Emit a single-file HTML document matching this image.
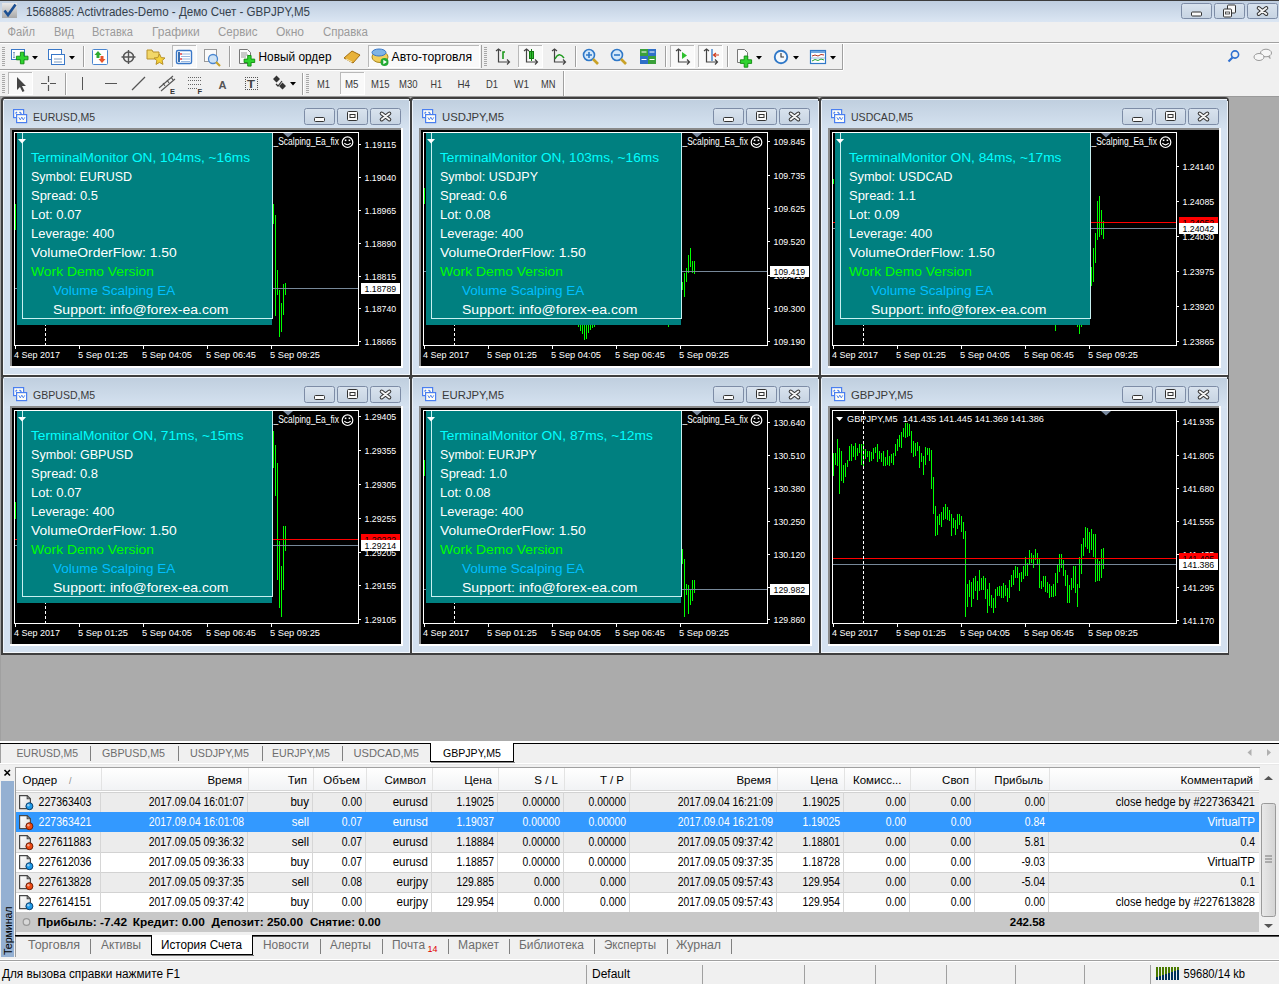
<!DOCTYPE html><html><head><meta charset="utf-8"><style>html,body{margin:0;padding:0;overflow:hidden;background:#f0f0f0} svg{display:block} text{font-family:"Liberation Sans",sans-serif}</style></head><body>
<svg width="1279" height="984" viewBox="0 0 1279 984" shape-rendering="crispEdges">
<defs>
<linearGradient id="gTitle" x1="0" y1="0" x2="0" y2="1"><stop offset="0" stop-color="#bfcee0"/><stop offset="1" stop-color="#dbe6f3"/></linearGradient>
<linearGradient id="gWin" x1="0" y1="0" x2="0" y2="1"><stop offset="0" stop-color="#c0cfdf"/><stop offset="1" stop-color="#d6e3f1"/></linearGradient>
<linearGradient id="gBtn" x1="0" y1="0" x2="0" y2="1"><stop offset="0" stop-color="#d9e3ee"/><stop offset="1" stop-color="#c6d3e2"/></linearGradient>
<linearGradient id="gHdr" x1="0" y1="0" x2="0" y2="1"><stop offset="0" stop-color="#ffffff"/><stop offset="1" stop-color="#f1f2f4"/></linearGradient>
<linearGradient id="gIco" x1="0" y1="0" x2="0" y2="1"><stop offset="0" stop-color="#e8e8e8"/><stop offset="1" stop-color="#a8a8a8"/></linearGradient>
<linearGradient id="gDoc" x1="0" y1="0" x2="1" y2="1"><stop offset="0" stop-color="#ffffff"/><stop offset="1" stop-color="#dcdcdc"/></linearGradient>
<linearGradient id="gThumb" x1="0" y1="0" x2="1" y2="0"><stop offset="0" stop-color="#e9e9e9"/><stop offset="1" stop-color="#d4d4d4"/></linearGradient>
</defs>
<rect x="0" y="0" width="1279" height="984" fill="#f0f0f0" />
<rect x="0" y="0" width="1279" height="1" fill="#3c3c3c" />
<rect x="0" y="1" width="1279" height="21" fill="url(#gTitle)" />
<rect x="2" y="3" width="15" height="15" fill="url(#gIco)" />
<path d="M4.5 10.5 L8 15 L15.5 4.5" stroke="#1b4f93" stroke-width="2.6" fill="none" shape-rendering="geometricPrecision"/>
<text x="26" y="15.5" font-size="12" fill="#34404c" textLength="284" lengthAdjust="spacingAndGlyphs" xml:space="preserve" >1568885: Activtrades-Demo - Демо Счет - GBPJPY,M5</text>
<rect x="1181.5" y="3.5" width="30" height="15" rx="2" fill="url(#gBtn)" stroke="#7d8ca6" shape-rendering="geometricPrecision"/>
<rect x="1191.5" y="12.0" width="10" height="4" rx="1" fill="#fafafa" stroke="#333" stroke-width="1" shape-rendering="geometricPrecision"/>
<rect x="1214.5" y="3.5" width="30" height="15" rx="2" fill="url(#gBtn)" stroke="#7d8ca6" shape-rendering="geometricPrecision"/>
<rect x="1227.5" y="5.0" width="8" height="8" rx="1" fill="#fafafa" stroke="#333" shape-rendering="geometricPrecision"/>
<rect x="1223.5" y="9.0" width="8" height="8" rx="1" fill="#fafafa" stroke="#333" shape-rendering="geometricPrecision"/>
<rect x="1225.5" y="12.0" width="4" height="2" fill="none" stroke="#333" stroke-width="0.8" shape-rendering="geometricPrecision"/>
<rect x="1247.5" y="3.5" width="30" height="15" rx="2" fill="url(#gBtn)" stroke="#7d8ca6" shape-rendering="geometricPrecision"/>
<path d="M1258.7 8.0 L1266.3 14.0 M1266.3 8.0 L1258.7 14.0" stroke="#333" stroke-width="4" stroke-linecap="round" shape-rendering="geometricPrecision"/>
<path d="M1258.7 8.0 L1266.3 14.0 M1266.3 8.0 L1258.7 14.0" stroke="#f4f4f4" stroke-width="2" stroke-linecap="round" shape-rendering="geometricPrecision"/>
<text x="7.5" y="36" font-size="12" fill="#9b9b9b" textLength="27.5" lengthAdjust="spacingAndGlyphs" xml:space="preserve" >Файл</text>
<text x="54" y="36" font-size="12" fill="#9b9b9b" textLength="20" lengthAdjust="spacingAndGlyphs" xml:space="preserve" >Вид</text>
<text x="92" y="36" font-size="12" fill="#9b9b9b" textLength="41" lengthAdjust="spacingAndGlyphs" xml:space="preserve" >Вставка</text>
<text x="152" y="36" font-size="12" fill="#9b9b9b" textLength="47.6" lengthAdjust="spacingAndGlyphs" xml:space="preserve" >Графики</text>
<text x="218" y="36" font-size="12" fill="#9b9b9b" textLength="39.5" lengthAdjust="spacingAndGlyphs" xml:space="preserve" >Сервис</text>
<text x="276" y="36" font-size="12" fill="#9b9b9b" textLength="28" lengthAdjust="spacingAndGlyphs" xml:space="preserve" >Окно</text>
<text x="323" y="36" font-size="12" fill="#9b9b9b" textLength="45" lengthAdjust="spacingAndGlyphs" xml:space="preserve" >Справка</text>
<rect x="0" y="42" width="1279" height="1" fill="#a0a0a0" />
<rect x="0" y="43" width="1279" height="1" fill="#ffffff" />
<rect x="842" y="44" width="1" height="26" fill="#a0a0a0" />
<rect x="843" y="44" width="1" height="26" fill="#ffffff" />
<rect x="0" y="69" width="843" height="1" fill="#a0a0a0" />
<rect x="0" y="70" width="843" height="1" fill="#ffffff" />
<rect x="563" y="71" width="1" height="25" fill="#a0a0a0" />
<rect x="564" y="71" width="1" height="25" fill="#ffffff" />
<rect x="2" y="47" width="3" height="1" fill="#a8a8a8" />
<rect x="2" y="49" width="3" height="1" fill="#a8a8a8" />
<rect x="2" y="51" width="3" height="1" fill="#a8a8a8" />
<rect x="2" y="53" width="3" height="1" fill="#a8a8a8" />
<rect x="2" y="55" width="3" height="1" fill="#a8a8a8" />
<rect x="2" y="57" width="3" height="1" fill="#a8a8a8" />
<rect x="2" y="59" width="3" height="1" fill="#a8a8a8" />
<rect x="2" y="61" width="3" height="1" fill="#a8a8a8" />
<rect x="2" y="63" width="3" height="1" fill="#a8a8a8" />
<rect x="2" y="65" width="3" height="1" fill="#a8a8a8" />
<rect x="2" y="74" width="3" height="1" fill="#a8a8a8" />
<rect x="2" y="76" width="3" height="1" fill="#a8a8a8" />
<rect x="2" y="78" width="3" height="1" fill="#a8a8a8" />
<rect x="2" y="80" width="3" height="1" fill="#a8a8a8" />
<rect x="2" y="82" width="3" height="1" fill="#a8a8a8" />
<rect x="2" y="84" width="3" height="1" fill="#a8a8a8" />
<rect x="2" y="86" width="3" height="1" fill="#a8a8a8" />
<rect x="2" y="88" width="3" height="1" fill="#a8a8a8" />
<rect x="2" y="90" width="3" height="1" fill="#a8a8a8" />
<rect x="2" y="92" width="3" height="1" fill="#a8a8a8" />
<rect x="484" y="47" width="3" height="1" fill="#a8a8a8" />
<rect x="484" y="49" width="3" height="1" fill="#a8a8a8" />
<rect x="484" y="51" width="3" height="1" fill="#a8a8a8" />
<rect x="484" y="53" width="3" height="1" fill="#a8a8a8" />
<rect x="484" y="55" width="3" height="1" fill="#a8a8a8" />
<rect x="484" y="57" width="3" height="1" fill="#a8a8a8" />
<rect x="484" y="59" width="3" height="1" fill="#a8a8a8" />
<rect x="484" y="61" width="3" height="1" fill="#a8a8a8" />
<rect x="484" y="63" width="3" height="1" fill="#a8a8a8" />
<rect x="484" y="65" width="3" height="1" fill="#a8a8a8" />
<rect x="306" y="74" width="3" height="1" fill="#a8a8a8" />
<rect x="306" y="76" width="3" height="1" fill="#a8a8a8" />
<rect x="306" y="78" width="3" height="1" fill="#a8a8a8" />
<rect x="306" y="80" width="3" height="1" fill="#a8a8a8" />
<rect x="306" y="82" width="3" height="1" fill="#a8a8a8" />
<rect x="306" y="84" width="3" height="1" fill="#a8a8a8" />
<rect x="306" y="86" width="3" height="1" fill="#a8a8a8" />
<rect x="306" y="88" width="3" height="1" fill="#a8a8a8" />
<rect x="306" y="90" width="3" height="1" fill="#a8a8a8" />
<rect x="306" y="92" width="3" height="1" fill="#a8a8a8" />
<rect x="83" y="46" width="1" height="21" fill="#a0a0a0" />
<rect x="84" y="46" width="1" height="21" fill="#ffffff" />
<rect x="229" y="46" width="1" height="21" fill="#a0a0a0" />
<rect x="230" y="46" width="1" height="21" fill="#ffffff" />
<rect x="575" y="46" width="1" height="21" fill="#a0a0a0" />
<rect x="576" y="46" width="1" height="21" fill="#ffffff" />
<rect x="665" y="46" width="1" height="21" fill="#a0a0a0" />
<rect x="666" y="46" width="1" height="21" fill="#ffffff" />
<rect x="727" y="46" width="1" height="21" fill="#a0a0a0" />
<rect x="728" y="46" width="1" height="21" fill="#ffffff" />
<rect x="481" y="45" width="1" height="23" fill="#a0a0a0" />
<rect x="65" y="73" width="1" height="22" fill="#a0a0a0" />
<rect x="66" y="73" width="1" height="22" fill="#ffffff" />
<rect x="302" y="73" width="1" height="22" fill="#a0a0a0" />
<rect x="303" y="73" width="1" height="22" fill="#ffffff" />
<rect x="172" y="45" width="25" height="23" fill="#f9f9f9" />
<rect x="172" y="45" width="25" height="1" fill="#b9b9b9" />
<rect x="172" y="45" width="1" height="23" fill="#b9b9b9" />
<rect x="172" y="67" width="25" height="1" fill="#ffffff" />
<rect x="196" y="45" width="1" height="23" fill="#ffffff" />
<rect x="368" y="45" width="112" height="23" fill="#f9f9f9" />
<rect x="368" y="45" width="112" height="1" fill="#b9b9b9" />
<rect x="368" y="45" width="1" height="23" fill="#b9b9b9" />
<rect x="368" y="67" width="112" height="1" fill="#ffffff" />
<rect x="479" y="45" width="1" height="23" fill="#ffffff" />
<rect x="518" y="45" width="25" height="23" fill="#f9f9f9" />
<rect x="518" y="45" width="25" height="1" fill="#b9b9b9" />
<rect x="518" y="45" width="1" height="23" fill="#b9b9b9" />
<rect x="518" y="67" width="25" height="1" fill="#ffffff" />
<rect x="542" y="45" width="1" height="23" fill="#ffffff" />
<rect x="670" y="45" width="25" height="23" fill="#f9f9f9" />
<rect x="670" y="45" width="25" height="1" fill="#b9b9b9" />
<rect x="670" y="45" width="1" height="23" fill="#b9b9b9" />
<rect x="670" y="67" width="25" height="1" fill="#ffffff" />
<rect x="694" y="45" width="1" height="23" fill="#ffffff" />
<rect x="698" y="45" width="25" height="23" fill="#f9f9f9" />
<rect x="698" y="45" width="25" height="1" fill="#b9b9b9" />
<rect x="698" y="45" width="1" height="23" fill="#b9b9b9" />
<rect x="698" y="67" width="25" height="1" fill="#ffffff" />
<rect x="722" y="45" width="1" height="23" fill="#ffffff" />
<rect x="8" y="72" width="25" height="23" fill="#f9f9f9" />
<rect x="8" y="72" width="25" height="1" fill="#b9b9b9" />
<rect x="8" y="72" width="1" height="23" fill="#b9b9b9" />
<rect x="8" y="94" width="25" height="1" fill="#ffffff" />
<rect x="32" y="72" width="1" height="23" fill="#ffffff" />
<rect x="340" y="72" width="25" height="23" fill="#f9f9f9" />
<rect x="340" y="72" width="25" height="1" fill="#b9b9b9" />
<rect x="340" y="72" width="1" height="23" fill="#b9b9b9" />
<rect x="340" y="94" width="25" height="1" fill="#ffffff" />
<rect x="364" y="72" width="1" height="23" fill="#ffffff" />
<g shape-rendering="geometricPrecision"><rect x="11.5" y="49.5" width="13" height="10" fill="#fff" stroke="#3a78c8"/><path d="M14 52 v6 M13 53 l1 -1 l1 1 M13 57 l1 1 l1 -1" stroke="#7f9cc0" fill="none"/><path d="M20.4 52.2 h3.6 v4 h4 v3.6 h-4 v4 h-3.6 v-4 h-4 v-3.6 h4 z" fill="#2fd42f" stroke="#0f8a0f" stroke-width="0.9"/></g>
<g shape-rendering="geometricPrecision"><path d="M32 56 h6 l-3 3.5 z" fill="#000"/></g>
<g shape-rendering="geometricPrecision"><rect x="48.5" y="49.5" width="13" height="10" fill="#fff" stroke="#3a78c8"/><rect x="51.5" y="54.5" width="13" height="10" fill="#fff" stroke="#3a78c8"/><path d="M54 59 h8 M54 62 h8" stroke="#7f9cc0"/></g>
<g shape-rendering="geometricPrecision"><path d="M69 56 h6 l-3 3.5 z" fill="#000"/></g>
<g shape-rendering="geometricPrecision"><rect x="92.5" y="49.5" width="15" height="15" rx="1" fill="#fff" stroke="#4a86d0"/><path d="M98 51 l-3.5 4 h2 v3 h3 v-3 h2 z" fill="#2eaa2e"/><path d="M102 63 l3.5 -4 h-2 v-3 h-3 v3 h-2 z" fill="#e8552a"/></g>
<g shape-rendering="geometricPrecision"><circle cx="128.5" cy="57" r="5" fill="none" stroke="#555" stroke-width="1.6"/><path d="M128.5 50 v14 M121.5 57 h14" stroke="#555" stroke-width="1.4"/></g>
<g shape-rendering="geometricPrecision"><path d="M147 50 h5 l1 2 h6 v7 h-12 z" fill="#f2d768" stroke="#b8912a"/><path d="M159.5 54 l1.7 3.6 3.8 .4 -2.9 2.6 .9 3.8 -3.5 -2 -3.5 2 .9 -3.8 -2.9 -2.6 3.8 -.4 z" fill="#f5d23a" stroke="#b8912a"/></g>
<g shape-rendering="geometricPrecision"><rect x="176.5" y="50.5" width="15" height="13" rx="1.5" fill="#fff" stroke="#3a78c8" stroke-width="1.4"/><rect x="178" y="52" width="2" height="10" fill="#3a6fb0"/><path d="M181 54 h9 M181 56.5 h9 M181 59 h9 M181 61.5 h9" stroke="#9ab8e0"/><circle cx="181" cy="54" r=".9" fill="#e33"/><circle cx="181" cy="59" r=".9" fill="#e33"/></g>
<g shape-rendering="geometricPrecision"><rect x="204.5" y="49.5" width="12" height="12" fill="#fafafa" stroke="#9a9a9a"/><circle cx="213" cy="59" r="4.5" fill="#cfe3f5" stroke="#4a86d0" stroke-width="1.3"/><path d="M216 62 l4 4" stroke="#c9a227" stroke-width="2.2"/></g>
<g shape-rendering="geometricPrecision"><path d="M239.5 49.5 h8 l3 3 v11 h-11 z" fill="#fafafa" stroke="#777"/><path d="M241 53 h6 M241 55 h7 M241 57 h5" stroke="#999"/><path d="M247.7 55.5 h3.4 v3.6 h3.6 v3.4 h-3.6 v3.6 h-3.4 v-3.6 h-3.6 v-3.4 h3.6 z" fill="#2fd42f" stroke="#0f8a0f" stroke-width="0.9"/></g>
<text x="258.5" y="60.5" font-size="12" fill="#000" textLength="73" lengthAdjust="spacingAndGlyphs" xml:space="preserve" >Новый ордер</text>
<g shape-rendering="geometricPrecision"><path d="M344 58 l8 -7 l8 4 l-7 8 z" fill="#e8b23a" stroke="#a36f12"/><path d="M346 59 l6 3" stroke="#fff3c0"/></g>
<g shape-rendering="geometricPrecision"><ellipse cx="380" cy="57" rx="8" ry="5.5" fill="#f2cf5c" stroke="#a7861f"/><ellipse cx="379" cy="52.5" rx="7" ry="3.5" fill="#7fb4e6" stroke="#3a78c8"/><circle cx="384.5" cy="62" r="4" fill="#22aa33"/><path d="M383.3 59.8 v4.4 l3.6 -2.2 z" fill="#fff"/></g>
<text x="391.5" y="60.5" font-size="12" fill="#000" textLength="80.5" lengthAdjust="spacingAndGlyphs" xml:space="preserve" >Авто-торговля</text>
<g shape-rendering="geometricPrecision"><path d="M498.5 49 v13 h11 M496 51 l2.5 -2 2.5 2 M507 59.5 l2.5 2.5 -2.5 2.5" stroke="#444" fill="none" stroke-width="1.2"/><path d="M503 59 v-7 h2" stroke="#1e9a1e" stroke-width="1.6" fill="none"/></g>
<g shape-rendering="geometricPrecision"><path d="M526.5 49 v13 h11 M524 51 l2.5 -2 2.5 2 M535 59.5 l2.5 2.5 -2.5 2.5" stroke="#444" fill="none" stroke-width="1.2"/><rect x="529.5" y="51.5" width="4" height="7" fill="#2ec02e" stroke="#137a13"/><path d="M531.5 49 v12" stroke="#137a13"/></g>
<g shape-rendering="geometricPrecision"><path d="M554.5 49 v13 h11 M552 51 l2.5 -2 2.5 2 M563 59.5 l2.5 2.5 -2.5 2.5" stroke="#444" fill="none" stroke-width="1.2"/><path d="M555 59 q4 -8 9 -1" stroke="#1e9a1e" stroke-width="1.4" fill="none"/></g>
<g shape-rendering="geometricPrecision"><circle cx="589" cy="55" r="5.5" fill="#d4e8fa" stroke="#2f78c8" stroke-width="1.6"/><path d="M586 55 h6 M589 52 v6" stroke="#2f78c8" stroke-width="1.6"/><path d="M593 59 l5 5" stroke="#c9a227" stroke-width="2.6"/></g>
<g shape-rendering="geometricPrecision"><circle cx="617" cy="55" r="5.5" fill="#d4e8fa" stroke="#2f78c8" stroke-width="1.6"/><path d="M614 55 h6" stroke="#2f78c8" stroke-width="1.6"/><path d="M621 59 l5 5" stroke="#c9a227" stroke-width="2.6"/></g>
<g shape-rendering="geometricPrecision"><rect x="640" y="49" width="8" height="7" fill="#3aa03a"/><rect x="648" y="49" width="8" height="7" fill="#2f6fc8"/><rect x="640" y="56" width="8" height="8" fill="#2f6fc8"/><rect x="648" y="56" width="8" height="8" fill="#3aa03a"/><path d="M641.5 52 h5 M649.5 52 h5 M641.5 59.5 h5 M649.5 59.5 h5" stroke="#fff"/></g>
<g shape-rendering="geometricPrecision"><path d="M678.5 49 v13 h11 M676 51 l2.5 -2 2.5 2 M687 59.5 l2.5 2.5 -2.5 2.5" stroke="#444" fill="none" stroke-width="1.2"/><path d="M682 52 l5 3.5 -5 3.5 z" fill="#2ec02e"/></g>
<g shape-rendering="geometricPrecision"><path d="M706.5 49 v13 h11 M704 51 l2.5 -2 2.5 2 M715 59.5 l2.5 2.5 -2.5 2.5" stroke="#444" fill="none" stroke-width="1.2"/><path d="M712 49 v12" stroke="#2f78c8" stroke-width="1.3"/><path d="M719 55 h-5 M716 53 l-2.5 2 2.5 2" stroke="#d03a1a" stroke-width="1.2" fill="none"/></g>
<g shape-rendering="geometricPrecision"><path d="M737.5 49.5 h7 l3 3 v10 h-10 z" fill="#fafafa" stroke="#777"/><path d="M744.2 56 h3.6 v3.8 h3.8 v3.6 h-3.8 v3.8 h-3.6 v-3.8 h-3.8 v-3.6 h3.8 z" fill="#2fd42f" stroke="#0f8a0f" stroke-width="0.9"/></g>
<g shape-rendering="geometricPrecision"><path d="M756 56 h6 l-3 3.5 z" fill="#000"/></g>
<g shape-rendering="geometricPrecision"><circle cx="781" cy="57" r="7.2" fill="#2f78c8"/><circle cx="781" cy="57" r="5.3" fill="#f4f8fc"/><path d="M781 53 v4 h3" stroke="#333" stroke-width="1.1" fill="none"/></g>
<g shape-rendering="geometricPrecision"><path d="M793 56 h6 l-3 3.5 z" fill="#000"/></g>
<g shape-rendering="geometricPrecision"><rect x="810.5" y="50.5" width="15" height="13" fill="#fff" stroke="#2f78c8" stroke-width="1.2"/><rect x="811" y="51" width="14" height="2" fill="#6fa6e0"/><path d="M812 56 l3 -1 3 1 3 -1.5 3 0.5" stroke="#b03020" fill="none"/><path d="M811 58 h14" stroke="#9ab8e0"/><path d="M812 61 l3 -1.5 3 1 3 -1.5 3 1" stroke="#20a030" fill="none"/></g>
<g shape-rendering="geometricPrecision"><path d="M830 56 h6 l-3 3.5 z" fill="#000"/></g>
<g shape-rendering="geometricPrecision"><circle cx="1235" cy="54.5" r="3.6" fill="none" stroke="#2e6fd0" stroke-width="1.6"/><path d="M1232.5 57.5 l-4 4" stroke="#2e6fd0" stroke-width="2.2"/></g>
<g shape-rendering="geometricPrecision"><ellipse cx="1266" cy="53" rx="5.5" ry="3.8" fill="#f6f6f6" stroke="#999"/><path d="M1268 56 l2 2.5 l-0.5 -3" fill="#f6f6f6" stroke="#999"/><ellipse cx="1259" cy="57" rx="5" ry="3.5" fill="#f6f6f6" stroke="#999"/></g>
<g shape-rendering="geometricPrecision"><path d="M17 77 v13 l3 -3 l2.5 5 l2 -1 l-2.5 -5 h4 z" fill="#444"/></g>
<g shape-rendering="geometricPrecision"><path d="M48.5 76 v6 M48.5 85 v6 M41 83.5 h6 M50 83.5 h6" stroke="#555" stroke-width="1.2"/></g>
<rect x="82" y="77" width="1" height="13" fill="#555" />
<rect x="105" y="83" width="12" height="1" fill="#555" />
<g shape-rendering="geometricPrecision"><path d="M132 90 l13 -13" stroke="#555" stroke-width="1.2"/></g>
<g shape-rendering="geometricPrecision"><path d="M159 88 l14 -12 M161 91 l14 -12 M163 83 l2 3 M167 80 l2 3 M171 77 l2 3" stroke="#555" stroke-width="1.1" fill="none"/></g>
<text x="170" y="93.5" font-size="7.5" fill="#333" font-weight="bold" xml:space="preserve" >E</text>
<rect x="188" y="77" width="1" height="1" fill="#666" />
<rect x="190" y="77" width="1" height="1" fill="#666" />
<rect x="192" y="77" width="1" height="1" fill="#666" />
<rect x="194" y="77" width="1" height="1" fill="#666" />
<rect x="196" y="77" width="1" height="1" fill="#666" />
<rect x="198" y="77" width="1" height="1" fill="#666" />
<rect x="200" y="77" width="1" height="1" fill="#666" />
<rect x="188" y="80" width="1" height="1" fill="#666" />
<rect x="190" y="80" width="1" height="1" fill="#666" />
<rect x="192" y="80" width="1" height="1" fill="#666" />
<rect x="194" y="80" width="1" height="1" fill="#666" />
<rect x="196" y="80" width="1" height="1" fill="#666" />
<rect x="198" y="80" width="1" height="1" fill="#666" />
<rect x="200" y="80" width="1" height="1" fill="#666" />
<rect x="188" y="84" width="1" height="1" fill="#666" />
<rect x="190" y="84" width="1" height="1" fill="#666" />
<rect x="192" y="84" width="1" height="1" fill="#666" />
<rect x="194" y="84" width="1" height="1" fill="#666" />
<rect x="196" y="84" width="1" height="1" fill="#666" />
<rect x="198" y="84" width="1" height="1" fill="#666" />
<rect x="200" y="84" width="1" height="1" fill="#666" />
<rect x="188" y="88" width="1" height="1" fill="#666" />
<rect x="190" y="88" width="1" height="1" fill="#666" />
<rect x="192" y="88" width="1" height="1" fill="#666" />
<rect x="194" y="88" width="1" height="1" fill="#666" />
<rect x="196" y="88" width="1" height="1" fill="#666" />
<text x="197.5" y="93.5" font-size="7.5" fill="#333" font-weight="bold" xml:space="preserve" >F</text>
<text x="218.5" y="89" font-size="11" fill="#555" textLength="8" lengthAdjust="spacingAndGlyphs" font-weight="bold" xml:space="preserve" >A</text>
<rect x="245" y="77" width="1" height="1" fill="#555" />
<rect x="245" y="89" width="1" height="1" fill="#555" />
<rect x="247" y="77" width="1" height="1" fill="#555" />
<rect x="247" y="89" width="1" height="1" fill="#555" />
<rect x="249" y="77" width="1" height="1" fill="#555" />
<rect x="249" y="89" width="1" height="1" fill="#555" />
<rect x="251" y="77" width="1" height="1" fill="#555" />
<rect x="251" y="89" width="1" height="1" fill="#555" />
<rect x="253" y="77" width="1" height="1" fill="#555" />
<rect x="253" y="89" width="1" height="1" fill="#555" />
<rect x="255" y="77" width="1" height="1" fill="#555" />
<rect x="255" y="89" width="1" height="1" fill="#555" />
<rect x="257" y="77" width="1" height="1" fill="#555" />
<rect x="257" y="89" width="1" height="1" fill="#555" />
<rect x="245" y="77" width="1" height="1" fill="#555" />
<rect x="257" y="77" width="1" height="1" fill="#555" />
<rect x="245" y="79" width="1" height="1" fill="#555" />
<rect x="257" y="79" width="1" height="1" fill="#555" />
<rect x="245" y="81" width="1" height="1" fill="#555" />
<rect x="257" y="81" width="1" height="1" fill="#555" />
<rect x="245" y="83" width="1" height="1" fill="#555" />
<rect x="257" y="83" width="1" height="1" fill="#555" />
<rect x="245" y="85" width="1" height="1" fill="#555" />
<rect x="257" y="85" width="1" height="1" fill="#555" />
<rect x="245" y="87" width="1" height="1" fill="#555" />
<rect x="257" y="87" width="1" height="1" fill="#555" />
<rect x="245" y="89" width="1" height="1" fill="#555" />
<rect x="257" y="89" width="1" height="1" fill="#555" />
<text x="247" y="88" font-size="11" fill="#444" textLength="8" lengthAdjust="spacingAndGlyphs" font-weight="bold" xml:space="preserve" >T</text>
<g shape-rendering="geometricPrecision"><path d="M273 79 l3.5 -3.5 3.5 3.5 -3.5 3.5 z M279 86 l3.5 -3.5 3.5 3.5 -3.5 3.5 z" fill="#333"/><path d="M276 84 l2 2 l4 -5" stroke="#333" stroke-width="1.2" fill="none"/></g>
<g shape-rendering="geometricPrecision"><path d="M290 82 h6 l-3 3.5 z" fill="#000"/></g>
<text x="317" y="88" font-size="11" fill="#3a3a3a" textLength="13" lengthAdjust="spacingAndGlyphs" xml:space="preserve" >M1</text>
<text x="345" y="88" font-size="11" fill="#3a3a3a" textLength="13.5" lengthAdjust="spacingAndGlyphs" xml:space="preserve" >M5</text>
<text x="371" y="88" font-size="11" fill="#3a3a3a" textLength="18.5" lengthAdjust="spacingAndGlyphs" xml:space="preserve" >M15</text>
<text x="399" y="88" font-size="11" fill="#3a3a3a" textLength="18.5" lengthAdjust="spacingAndGlyphs" xml:space="preserve" >M30</text>
<text x="430.5" y="88" font-size="11" fill="#3a3a3a" textLength="11.5" lengthAdjust="spacingAndGlyphs" xml:space="preserve" >H1</text>
<text x="457.5" y="88" font-size="11" fill="#3a3a3a" textLength="12.5" lengthAdjust="spacingAndGlyphs" xml:space="preserve" >H4</text>
<text x="486" y="88" font-size="11" fill="#3a3a3a" textLength="12" lengthAdjust="spacingAndGlyphs" xml:space="preserve" >D1</text>
<text x="514" y="88" font-size="11" fill="#3a3a3a" textLength="15" lengthAdjust="spacingAndGlyphs" xml:space="preserve" >W1</text>
<text x="541" y="88" font-size="11" fill="#3a3a3a" textLength="14.5" lengthAdjust="spacingAndGlyphs" xml:space="preserve" >MN</text>
<rect x="0" y="96" width="1279" height="646" fill="#ababab" />
<rect x="0" y="96" width="1279" height="1" fill="#9a9a9a" />
<rect x="0" y="96" width="1" height="646" fill="#a0a0a0" />
<path d="M2 376 V101 Q2 98 5 98 H407 Q410 98 410 101 V376 Z" fill="#d4e1f0" stroke="#3f3f3f" stroke-width="2" shape-rendering="geometricPrecision"/>
<rect x="4" y="100" width="405" height="30" fill="url(#gWin)" />
<rect x="3" y="101" width="1" height="274" fill="#eef4fb" />
<rect x="409" y="101" width="1" height="274" fill="#eef4fb" />
<rect x="4" y="99" width="405" height="1" fill="#eef4fb" />
<rect x="3" y="374" width="407" height="1" fill="#f4f8fc" />
<g shape-rendering="geometricPrecision"><rect x="13.6" y="109.6" width="10" height="8" fill="#fffef6" stroke="#4a7ff0" stroke-width="1.2"/><path d="M15.5 113.5 l1.5 -1.5 M19.5 112 l2 1.8" stroke="#4a7ff0" stroke-width="1.3" fill="none"/><rect x="16.6" y="114.6" width="10" height="8" fill="#fffef6" stroke="#4a7ff0" stroke-width="1.2"/><path d="M18.8 117.3 l1.5 2.6 l1.5 -2.8 l1.5 2.8 l1.5 -2.6" stroke="#4a7ff0" stroke-width="0.9" fill="none"/></g>
<text x="33" y="121" font-size="11" fill="#3a3a3a" textLength="62.1" lengthAdjust="spacingAndGlyphs" xml:space="preserve" >EURUSD,M5</text>
<rect x="304.5" y="108.5" width="30" height="16" rx="2" fill="url(#gBtn)" stroke="#7d8ca6" shape-rendering="geometricPrecision"/>
<rect x="314.5" y="117.5" width="10" height="4" rx="1" fill="#fafafa" stroke="#333" stroke-width="1" shape-rendering="geometricPrecision"/>
<rect x="337.5" y="108.5" width="30" height="16" rx="2" fill="url(#gBtn)" stroke="#7d8ca6" shape-rendering="geometricPrecision"/>
<rect x="347.5" y="111.5" width="10" height="9" rx="1" fill="#fafafa" stroke="#333" stroke-width="1" shape-rendering="geometricPrecision"/>
<rect x="350.0" y="114.5" width="5" height="3" fill="none" stroke="#333" stroke-width="1" shape-rendering="geometricPrecision"/>
<rect x="370.5" y="108.5" width="30" height="16" rx="2" fill="url(#gBtn)" stroke="#7d8ca6" shape-rendering="geometricPrecision"/>
<path d="M381.7 113.5 L389.3 119.5 M389.3 113.5 L381.7 119.5" stroke="#333" stroke-width="4" stroke-linecap="round" shape-rendering="geometricPrecision"/>
<path d="M381.7 113.5 L389.3 119.5 M389.3 113.5 L381.7 119.5" stroke="#f4f4f4" stroke-width="2" stroke-linecap="round" shape-rendering="geometricPrecision"/>
<rect x="10" y="128" width="393" height="2" fill="#8a8a8a" />
<rect x="10" y="128" width="2" height="240" fill="#8a8a8a" />
<rect x="10" y="366" width="393" height="2" fill="#ffffff" />
<rect x="401" y="128" width="2" height="240" fill="#ffffff" />
<rect x="12" y="130" width="389" height="236" fill="#000" />
<rect x="15" y="204" width="1" height="26" fill="#00ff00" />
<rect x="273" y="204" width="1" height="20" fill="#00ff00" />
<rect x="275" y="215" width="1" height="101" fill="#00ff00" />
<rect x="277" y="270" width="1" height="25" fill="#00ff00" />
<rect x="279" y="290" width="1" height="47" fill="#00ff00" />
<rect x="281" y="303" width="1" height="29" fill="#00ff00" />
<rect x="283" y="284" width="1" height="31" fill="#00ff00" />
<rect x="285" y="283" width="1" height="12" fill="#00ff00" />
<rect x="14" y="288" width="345" height="1" fill="#778899" />
<path d="M45.5 133 V345" stroke="#fff" stroke-dasharray="3 2" />
<rect x="14.5" y="132.5" width="344" height="213" fill="none" stroke="#fff"/>
<rect x="359" y="144" width="2" height="1" fill="#fff" />
<text x="364.5" y="148" font-size="9.6" fill="#fff" textLength="31.7" lengthAdjust="spacingAndGlyphs" xml:space="preserve" >1.19115</text>
<rect x="359" y="177" width="2" height="1" fill="#fff" />
<text x="364.5" y="181" font-size="9.6" fill="#fff" textLength="31.7" lengthAdjust="spacingAndGlyphs" xml:space="preserve" >1.19040</text>
<rect x="359" y="210" width="2" height="1" fill="#fff" />
<text x="364.5" y="214" font-size="9.6" fill="#fff" textLength="31.7" lengthAdjust="spacingAndGlyphs" xml:space="preserve" >1.18965</text>
<rect x="359" y="243" width="2" height="1" fill="#fff" />
<text x="364.5" y="247" font-size="9.6" fill="#fff" textLength="31.7" lengthAdjust="spacingAndGlyphs" xml:space="preserve" >1.18890</text>
<rect x="359" y="276" width="2" height="1" fill="#fff" />
<text x="364.5" y="280" font-size="9.6" fill="#fff" textLength="31.7" lengthAdjust="spacingAndGlyphs" xml:space="preserve" >1.18815</text>
<rect x="359" y="308" width="2" height="1" fill="#fff" />
<text x="364.5" y="312" font-size="9.6" fill="#fff" textLength="31.7" lengthAdjust="spacingAndGlyphs" xml:space="preserve" >1.18740</text>
<rect x="359" y="341" width="2" height="1" fill="#fff" />
<text x="364.5" y="345" font-size="9.6" fill="#fff" textLength="31.7" lengthAdjust="spacingAndGlyphs" xml:space="preserve" >1.18665</text>
<rect x="361" y="283" width="39" height="11" fill="#fff" />
<text x="364.5" y="292" font-size="9.6" fill="#000" textLength="31.7" lengthAdjust="spacingAndGlyphs" xml:space="preserve" >1.18789</text>
<rect x="15" y="345" width="1" height="4" fill="#fff" />
<text x="14" y="358" font-size="9.6" fill="#fff" textLength="46" lengthAdjust="spacingAndGlyphs" xml:space="preserve" >4 Sep 2017</text>
<rect x="79" y="345" width="1" height="4" fill="#fff" />
<text x="78" y="358" font-size="9.6" fill="#fff" textLength="50" lengthAdjust="spacingAndGlyphs" xml:space="preserve" >5 Sep 01:25</text>
<rect x="143" y="345" width="1" height="4" fill="#fff" />
<text x="142" y="358" font-size="9.6" fill="#fff" textLength="50" lengthAdjust="spacingAndGlyphs" xml:space="preserve" >5 Sep 04:05</text>
<rect x="207" y="345" width="1" height="4" fill="#fff" />
<text x="206" y="358" font-size="9.6" fill="#fff" textLength="50" lengthAdjust="spacingAndGlyphs" xml:space="preserve" >5 Sep 06:45</text>
<rect x="271" y="345" width="1" height="4" fill="#fff" />
<text x="270" y="358" font-size="9.6" fill="#fff" textLength="50" lengthAdjust="spacingAndGlyphs" xml:space="preserve" >5 Sep 09:25</text>
<g shape-rendering="geometricPrecision"><path d="M283 133 h10 l-5 4.5 z" fill="#7a8aa0"/></g>
<rect x="17" y="133" width="255" height="192" fill="#008080" />
<rect x="22" y="133" width="1" height="186" fill="#c8f0f0" />
<rect x="272" y="133" width="1" height="186" fill="#c8f0f0" />
<rect x="22" y="318" width="251" height="1" fill="#c8f0f0" />
<g shape-rendering="geometricPrecision"><path d="M18 139 h8 l-4 4.5 z" fill="#fff"/></g>
<text x="31" y="161.5" font-size="12" fill="#00ffff" textLength="219" lengthAdjust="spacingAndGlyphs" xml:space="preserve" >TerminalMonitor ON, 104ms, ~16ms</text>
<text x="31" y="180.5" font-size="12" fill="#ffffff" textLength="101" lengthAdjust="spacingAndGlyphs" xml:space="preserve" >Symbol: EURUSD</text>
<text x="31" y="199.5" font-size="12" fill="#ffffff" textLength="67" lengthAdjust="spacingAndGlyphs" xml:space="preserve" >Spread: 0.5</text>
<text x="31" y="218.5" font-size="12" fill="#ffffff" textLength="50.6" lengthAdjust="spacingAndGlyphs" xml:space="preserve" >Lot: 0.07</text>
<text x="31" y="237.5" font-size="12" fill="#ffffff" textLength="83.3" lengthAdjust="spacingAndGlyphs" xml:space="preserve" >Leverage: 400</text>
<text x="31" y="256.5" font-size="12" fill="#ffffff" textLength="145.7" lengthAdjust="spacingAndGlyphs" xml:space="preserve" >VolumeOrderFlow: 1.50</text>
<text x="31" y="275.5" font-size="12" fill="#00ff00" textLength="123" lengthAdjust="spacingAndGlyphs" xml:space="preserve" >Work Demo Version</text>
<text x="53" y="294.5" font-size="12" fill="#00bfff" textLength="122.3" lengthAdjust="spacingAndGlyphs" xml:space="preserve" >Volume Scalping EA</text>
<text x="53" y="313.5" font-size="12" fill="#ffffff" textLength="175.5" lengthAdjust="spacingAndGlyphs" xml:space="preserve" >Support: info@forex-ea.com</text>
<text x="273.5" y="145" font-size="10" fill="#fff" textLength="65.5" lengthAdjust="spacingAndGlyphs" xml:space="preserve" >_Scalping_Ea_fix</text>
<g shape-rendering="geometricPrecision"><circle cx="347.5" cy="142.2" r="5.3" fill="none" stroke="#fff" stroke-width="1.2"/><rect x="344.8" y="139.5" width="1.6" height="1.6" fill="#fff"/><rect x="348.6" y="139.5" width="1.6" height="1.6" fill="#fff"/><path d="M344.3 143.2 q3.2 3.2 6.4 0" stroke="#fff" stroke-width="1.1" fill="none"/></g>
<path d="M411 376 V101 Q411 98 414 98 H816 Q819 98 819 101 V376 Z" fill="#d4e1f0" stroke="#3f3f3f" stroke-width="2" shape-rendering="geometricPrecision"/>
<rect x="413" y="100" width="405" height="30" fill="url(#gWin)" />
<rect x="412" y="101" width="1" height="274" fill="#eef4fb" />
<rect x="818" y="101" width="1" height="274" fill="#eef4fb" />
<rect x="413" y="99" width="405" height="1" fill="#eef4fb" />
<rect x="412" y="374" width="407" height="1" fill="#f4f8fc" />
<g shape-rendering="geometricPrecision"><rect x="422.6" y="109.6" width="10" height="8" fill="#fffef6" stroke="#4a7ff0" stroke-width="1.2"/><path d="M424.5 113.5 l1.5 -1.5 M428.5 112 l2 1.8" stroke="#4a7ff0" stroke-width="1.3" fill="none"/><rect x="425.6" y="114.6" width="10" height="8" fill="#fffef6" stroke="#4a7ff0" stroke-width="1.2"/><path d="M427.8 117.3 l1.5 2.6 l1.5 -2.8 l1.5 2.8 l1.5 -2.6" stroke="#4a7ff0" stroke-width="0.9" fill="none"/></g>
<text x="442" y="121" font-size="11" fill="#3a3a3a" textLength="62.1" lengthAdjust="spacingAndGlyphs" xml:space="preserve" >USDJPY,M5</text>
<rect x="713.5" y="108.5" width="30" height="16" rx="2" fill="url(#gBtn)" stroke="#7d8ca6" shape-rendering="geometricPrecision"/>
<rect x="723.5" y="117.5" width="10" height="4" rx="1" fill="#fafafa" stroke="#333" stroke-width="1" shape-rendering="geometricPrecision"/>
<rect x="746.5" y="108.5" width="30" height="16" rx="2" fill="url(#gBtn)" stroke="#7d8ca6" shape-rendering="geometricPrecision"/>
<rect x="756.5" y="111.5" width="10" height="9" rx="1" fill="#fafafa" stroke="#333" stroke-width="1" shape-rendering="geometricPrecision"/>
<rect x="759.0" y="114.5" width="5" height="3" fill="none" stroke="#333" stroke-width="1" shape-rendering="geometricPrecision"/>
<rect x="779.5" y="108.5" width="30" height="16" rx="2" fill="url(#gBtn)" stroke="#7d8ca6" shape-rendering="geometricPrecision"/>
<path d="M790.7 113.5 L798.3 119.5 M798.3 113.5 L790.7 119.5" stroke="#333" stroke-width="4" stroke-linecap="round" shape-rendering="geometricPrecision"/>
<path d="M790.7 113.5 L798.3 119.5 M798.3 113.5 L790.7 119.5" stroke="#f4f4f4" stroke-width="2" stroke-linecap="round" shape-rendering="geometricPrecision"/>
<rect x="419" y="128" width="393" height="2" fill="#8a8a8a" />
<rect x="419" y="128" width="2" height="240" fill="#8a8a8a" />
<rect x="419" y="366" width="393" height="2" fill="#ffffff" />
<rect x="810" y="128" width="2" height="240" fill="#ffffff" />
<rect x="421" y="130" width="389" height="236" fill="#000" />
<rect x="424" y="188" width="1" height="16" fill="#00ff00" />
<rect x="682" y="282" width="1" height="8" fill="#00ff00" />
<rect x="684" y="273" width="1" height="24" fill="#00ff00" />
<rect x="686" y="268" width="1" height="14" fill="#00ff00" />
<rect x="688" y="255" width="1" height="18" fill="#00ff00" />
<rect x="690" y="248" width="1" height="19" fill="#00ff00" />
<rect x="692" y="261" width="1" height="12" fill="#00ff00" />
<rect x="694" y="261" width="1" height="13" fill="#00ff00" />
<rect x="578" y="325" width="1" height="2" fill="#00ff00" />
<rect x="580" y="325" width="1" height="6" fill="#00ff00" />
<rect x="582" y="325" width="1" height="9" fill="#00ff00" />
<rect x="584" y="325" width="1" height="15" fill="#00ff00" />
<rect x="586" y="325" width="1" height="14" fill="#00ff00" />
<rect x="588" y="325" width="1" height="8" fill="#00ff00" />
<rect x="590" y="325" width="1" height="5" fill="#00ff00" />
<rect x="592" y="325" width="1" height="3" fill="#00ff00" />
<rect x="594" y="325" width="1" height="2" fill="#00ff00" />
<rect x="668" y="325" width="1" height="2" fill="#00ff00" />
<rect x="423" y="271" width="345" height="1" fill="#778899" />
<path d="M454.5 133 V345" stroke="#fff" stroke-dasharray="3 2" />
<rect x="423.5" y="132.5" width="344" height="213" fill="none" stroke="#fff"/>
<rect x="768" y="141" width="2" height="1" fill="#fff" />
<text x="773.5" y="145" font-size="9.6" fill="#fff" textLength="31.7" lengthAdjust="spacingAndGlyphs" xml:space="preserve" >109.845</text>
<rect x="768" y="175" width="2" height="1" fill="#fff" />
<text x="773.5" y="179" font-size="9.6" fill="#fff" textLength="31.7" lengthAdjust="spacingAndGlyphs" xml:space="preserve" >109.735</text>
<rect x="768" y="208" width="2" height="1" fill="#fff" />
<text x="773.5" y="212" font-size="9.6" fill="#fff" textLength="31.7" lengthAdjust="spacingAndGlyphs" xml:space="preserve" >109.625</text>
<rect x="768" y="241" width="2" height="1" fill="#fff" />
<text x="773.5" y="245" font-size="9.6" fill="#fff" textLength="31.7" lengthAdjust="spacingAndGlyphs" xml:space="preserve" >109.520</text>
<rect x="768" y="275" width="2" height="1" fill="#fff" />
<text x="773.5" y="279" font-size="9.6" fill="#fff" textLength="31.7" lengthAdjust="spacingAndGlyphs" xml:space="preserve" >109.410</text>
<rect x="768" y="308" width="2" height="1" fill="#fff" />
<text x="773.5" y="312" font-size="9.6" fill="#fff" textLength="31.7" lengthAdjust="spacingAndGlyphs" xml:space="preserve" >109.300</text>
<rect x="768" y="341" width="2" height="1" fill="#fff" />
<text x="773.5" y="345" font-size="9.6" fill="#fff" textLength="31.7" lengthAdjust="spacingAndGlyphs" xml:space="preserve" >109.190</text>
<rect x="770" y="266" width="39" height="11" fill="#fff" />
<text x="773.5" y="275" font-size="9.6" fill="#000" textLength="31.7" lengthAdjust="spacingAndGlyphs" xml:space="preserve" >109.419</text>
<rect x="424" y="345" width="1" height="4" fill="#fff" />
<text x="423" y="358" font-size="9.6" fill="#fff" textLength="46" lengthAdjust="spacingAndGlyphs" xml:space="preserve" >4 Sep 2017</text>
<rect x="488" y="345" width="1" height="4" fill="#fff" />
<text x="487" y="358" font-size="9.6" fill="#fff" textLength="50" lengthAdjust="spacingAndGlyphs" xml:space="preserve" >5 Sep 01:25</text>
<rect x="552" y="345" width="1" height="4" fill="#fff" />
<text x="551" y="358" font-size="9.6" fill="#fff" textLength="50" lengthAdjust="spacingAndGlyphs" xml:space="preserve" >5 Sep 04:05</text>
<rect x="616" y="345" width="1" height="4" fill="#fff" />
<text x="615" y="358" font-size="9.6" fill="#fff" textLength="50" lengthAdjust="spacingAndGlyphs" xml:space="preserve" >5 Sep 06:45</text>
<rect x="680" y="345" width="1" height="4" fill="#fff" />
<text x="679" y="358" font-size="9.6" fill="#fff" textLength="50" lengthAdjust="spacingAndGlyphs" xml:space="preserve" >5 Sep 09:25</text>
<g shape-rendering="geometricPrecision"><path d="M692 133 h10 l-5 4.5 z" fill="#7a8aa0"/></g>
<rect x="426" y="133" width="255" height="192" fill="#008080" />
<rect x="431" y="133" width="1" height="186" fill="#c8f0f0" />
<rect x="681" y="133" width="1" height="186" fill="#c8f0f0" />
<rect x="431" y="318" width="251" height="1" fill="#c8f0f0" />
<g shape-rendering="geometricPrecision"><path d="M427 139 h8 l-4 4.5 z" fill="#fff"/></g>
<text x="440" y="161.5" font-size="12" fill="#00ffff" textLength="219" lengthAdjust="spacingAndGlyphs" xml:space="preserve" >TerminalMonitor ON, 103ms, ~16ms</text>
<text x="440" y="180.5" font-size="12" fill="#ffffff" textLength="98" lengthAdjust="spacingAndGlyphs" xml:space="preserve" >Symbol: USDJPY</text>
<text x="440" y="199.5" font-size="12" fill="#ffffff" textLength="67" lengthAdjust="spacingAndGlyphs" xml:space="preserve" >Spread: 0.6</text>
<text x="440" y="218.5" font-size="12" fill="#ffffff" textLength="50.6" lengthAdjust="spacingAndGlyphs" xml:space="preserve" >Lot: 0.08</text>
<text x="440" y="237.5" font-size="12" fill="#ffffff" textLength="83.3" lengthAdjust="spacingAndGlyphs" xml:space="preserve" >Leverage: 400</text>
<text x="440" y="256.5" font-size="12" fill="#ffffff" textLength="145.7" lengthAdjust="spacingAndGlyphs" xml:space="preserve" >VolumeOrderFlow: 1.50</text>
<text x="440" y="275.5" font-size="12" fill="#00ff00" textLength="123" lengthAdjust="spacingAndGlyphs" xml:space="preserve" >Work Demo Version</text>
<text x="462" y="294.5" font-size="12" fill="#00bfff" textLength="122.3" lengthAdjust="spacingAndGlyphs" xml:space="preserve" >Volume Scalping EA</text>
<text x="462" y="313.5" font-size="12" fill="#ffffff" textLength="175.5" lengthAdjust="spacingAndGlyphs" xml:space="preserve" >Support: info@forex-ea.com</text>
<text x="682.5" y="145" font-size="10" fill="#fff" textLength="65.5" lengthAdjust="spacingAndGlyphs" xml:space="preserve" >_Scalping_Ea_fix</text>
<g shape-rendering="geometricPrecision"><circle cx="756.5" cy="142.2" r="5.3" fill="none" stroke="#fff" stroke-width="1.2"/><rect x="753.8" y="139.5" width="1.6" height="1.6" fill="#fff"/><rect x="757.6" y="139.5" width="1.6" height="1.6" fill="#fff"/><path d="M753.3 143.2 q3.2 3.2 6.4 0" stroke="#fff" stroke-width="1.1" fill="none"/></g>
<path d="M820 376 V101 Q820 98 823 98 H1225 Q1228 98 1228 101 V376 Z" fill="#d4e1f0" stroke="#3f3f3f" stroke-width="2" shape-rendering="geometricPrecision"/>
<rect x="822" y="100" width="405" height="30" fill="url(#gWin)" />
<rect x="821" y="101" width="1" height="274" fill="#eef4fb" />
<rect x="1227" y="101" width="1" height="274" fill="#eef4fb" />
<rect x="822" y="99" width="405" height="1" fill="#eef4fb" />
<rect x="821" y="374" width="407" height="1" fill="#f4f8fc" />
<g shape-rendering="geometricPrecision"><rect x="831.6" y="109.6" width="10" height="8" fill="#fffef6" stroke="#4a7ff0" stroke-width="1.2"/><path d="M833.5 113.5 l1.5 -1.5 M837.5 112 l2 1.8" stroke="#4a7ff0" stroke-width="1.3" fill="none"/><rect x="834.6" y="114.6" width="10" height="8" fill="#fffef6" stroke="#4a7ff0" stroke-width="1.2"/><path d="M836.8 117.3 l1.5 2.6 l1.5 -2.8 l1.5 2.8 l1.5 -2.6" stroke="#4a7ff0" stroke-width="0.9" fill="none"/></g>
<text x="851" y="121" font-size="11" fill="#3a3a3a" textLength="62.1" lengthAdjust="spacingAndGlyphs" xml:space="preserve" >USDCAD,M5</text>
<rect x="1122.5" y="108.5" width="30" height="16" rx="2" fill="url(#gBtn)" stroke="#7d8ca6" shape-rendering="geometricPrecision"/>
<rect x="1132.5" y="117.5" width="10" height="4" rx="1" fill="#fafafa" stroke="#333" stroke-width="1" shape-rendering="geometricPrecision"/>
<rect x="1155.5" y="108.5" width="30" height="16" rx="2" fill="url(#gBtn)" stroke="#7d8ca6" shape-rendering="geometricPrecision"/>
<rect x="1165.5" y="111.5" width="10" height="9" rx="1" fill="#fafafa" stroke="#333" stroke-width="1" shape-rendering="geometricPrecision"/>
<rect x="1168.0" y="114.5" width="5" height="3" fill="none" stroke="#333" stroke-width="1" shape-rendering="geometricPrecision"/>
<rect x="1188.5" y="108.5" width="30" height="16" rx="2" fill="url(#gBtn)" stroke="#7d8ca6" shape-rendering="geometricPrecision"/>
<path d="M1199.7 113.5 L1207.3 119.5 M1207.3 113.5 L1199.7 119.5" stroke="#333" stroke-width="4" stroke-linecap="round" shape-rendering="geometricPrecision"/>
<path d="M1199.7 113.5 L1207.3 119.5 M1207.3 113.5 L1199.7 119.5" stroke="#f4f4f4" stroke-width="2" stroke-linecap="round" shape-rendering="geometricPrecision"/>
<rect x="828" y="128" width="393" height="2" fill="#8a8a8a" />
<rect x="828" y="128" width="2" height="240" fill="#8a8a8a" />
<rect x="828" y="366" width="393" height="2" fill="#ffffff" />
<rect x="1219" y="128" width="2" height="240" fill="#ffffff" />
<rect x="830" y="130" width="389" height="236" fill="#000" />
<rect x="833" y="179" width="1" height="5" fill="#00ff00" />
<rect x="1091" y="267" width="1" height="19" fill="#00ff00" />
<rect x="1093" y="248" width="1" height="34" fill="#00ff00" />
<rect x="1095" y="233" width="1" height="30" fill="#00ff00" />
<rect x="1097" y="201" width="1" height="39" fill="#00ff00" />
<rect x="1099" y="196" width="1" height="41" fill="#00ff00" />
<rect x="1101" y="210" width="1" height="25" fill="#00ff00" />
<rect x="1103" y="221" width="1" height="18" fill="#00ff00" />
<rect x="1055" y="325" width="1" height="6" fill="#00ff00" />
<rect x="1079" y="325" width="1" height="9" fill="#00ff00" />
<rect x="1077" y="325" width="1" height="2" fill="#00ff00" />
<rect x="1081" y="325" width="1" height="2" fill="#00ff00" />
<rect x="832" y="222" width="345" height="1" fill="#ff0000" />
<rect x="832" y="228" width="345" height="1" fill="#778899" />
<path d="M863.5 133 V345" stroke="#fff" stroke-dasharray="3 2" />
<rect x="832.5" y="132.5" width="344" height="213" fill="none" stroke="#fff"/>
<rect x="1177" y="166" width="2" height="1" fill="#fff" />
<text x="1182.5" y="170" font-size="9.6" fill="#fff" textLength="31.7" lengthAdjust="spacingAndGlyphs" xml:space="preserve" >1.24140</text>
<rect x="1177" y="201" width="2" height="1" fill="#fff" />
<text x="1182.5" y="205" font-size="9.6" fill="#fff" textLength="31.7" lengthAdjust="spacingAndGlyphs" xml:space="preserve" >1.24085</text>
<rect x="1177" y="236" width="2" height="1" fill="#fff" />
<text x="1182.5" y="240" font-size="9.6" fill="#fff" textLength="31.7" lengthAdjust="spacingAndGlyphs" xml:space="preserve" >1.24030</text>
<rect x="1177" y="271" width="2" height="1" fill="#fff" />
<text x="1182.5" y="275" font-size="9.6" fill="#fff" textLength="31.7" lengthAdjust="spacingAndGlyphs" xml:space="preserve" >1.23975</text>
<rect x="1177" y="306" width="2" height="1" fill="#fff" />
<text x="1182.5" y="310" font-size="9.6" fill="#fff" textLength="31.7" lengthAdjust="spacingAndGlyphs" xml:space="preserve" >1.23920</text>
<rect x="1177" y="341" width="2" height="1" fill="#fff" />
<text x="1182.5" y="345" font-size="9.6" fill="#fff" textLength="31.7" lengthAdjust="spacingAndGlyphs" xml:space="preserve" >1.23865</text>
<rect x="1179" y="217" width="39" height="11" fill="#ff0000" />
<text x="1182.5" y="226" font-size="9.6" fill="#000" textLength="31.7" lengthAdjust="spacingAndGlyphs" xml:space="preserve" >1.24052</text>
<rect x="1179" y="223" width="39" height="11" fill="#fff" />
<text x="1182.5" y="232" font-size="9.6" fill="#000" textLength="31.7" lengthAdjust="spacingAndGlyphs" xml:space="preserve" >1.24042</text>
<rect x="833" y="345" width="1" height="4" fill="#fff" />
<text x="832" y="358" font-size="9.6" fill="#fff" textLength="46" lengthAdjust="spacingAndGlyphs" xml:space="preserve" >4 Sep 2017</text>
<rect x="897" y="345" width="1" height="4" fill="#fff" />
<text x="896" y="358" font-size="9.6" fill="#fff" textLength="50" lengthAdjust="spacingAndGlyphs" xml:space="preserve" >5 Sep 01:25</text>
<rect x="961" y="345" width="1" height="4" fill="#fff" />
<text x="960" y="358" font-size="9.6" fill="#fff" textLength="50" lengthAdjust="spacingAndGlyphs" xml:space="preserve" >5 Sep 04:05</text>
<rect x="1025" y="345" width="1" height="4" fill="#fff" />
<text x="1024" y="358" font-size="9.6" fill="#fff" textLength="50" lengthAdjust="spacingAndGlyphs" xml:space="preserve" >5 Sep 06:45</text>
<rect x="1089" y="345" width="1" height="4" fill="#fff" />
<text x="1088" y="358" font-size="9.6" fill="#fff" textLength="50" lengthAdjust="spacingAndGlyphs" xml:space="preserve" >5 Sep 09:25</text>
<g shape-rendering="geometricPrecision"><path d="M1101 133 h10 l-5 4.5 z" fill="#7a8aa0"/></g>
<rect x="835" y="133" width="255" height="192" fill="#008080" />
<rect x="840" y="133" width="1" height="186" fill="#c8f0f0" />
<rect x="1090" y="133" width="1" height="186" fill="#c8f0f0" />
<rect x="840" y="318" width="251" height="1" fill="#c8f0f0" />
<g shape-rendering="geometricPrecision"><path d="M836 139 h8 l-4 4.5 z" fill="#fff"/></g>
<text x="849" y="161.5" font-size="12" fill="#00ffff" textLength="212.5" lengthAdjust="spacingAndGlyphs" xml:space="preserve" >TerminalMonitor ON, 84ms, ~17ms</text>
<text x="849" y="180.5" font-size="12" fill="#ffffff" textLength="103.5" lengthAdjust="spacingAndGlyphs" xml:space="preserve" >Symbol: USDCAD</text>
<text x="849" y="199.5" font-size="12" fill="#ffffff" textLength="67" lengthAdjust="spacingAndGlyphs" xml:space="preserve" >Spread: 1.1</text>
<text x="849" y="218.5" font-size="12" fill="#ffffff" textLength="50.6" lengthAdjust="spacingAndGlyphs" xml:space="preserve" >Lot: 0.09</text>
<text x="849" y="237.5" font-size="12" fill="#ffffff" textLength="83.3" lengthAdjust="spacingAndGlyphs" xml:space="preserve" >Leverage: 400</text>
<text x="849" y="256.5" font-size="12" fill="#ffffff" textLength="145.7" lengthAdjust="spacingAndGlyphs" xml:space="preserve" >VolumeOrderFlow: 1.50</text>
<text x="849" y="275.5" font-size="12" fill="#00ff00" textLength="123" lengthAdjust="spacingAndGlyphs" xml:space="preserve" >Work Demo Version</text>
<text x="871" y="294.5" font-size="12" fill="#00bfff" textLength="122.3" lengthAdjust="spacingAndGlyphs" xml:space="preserve" >Volume Scalping EA</text>
<text x="871" y="313.5" font-size="12" fill="#ffffff" textLength="175.5" lengthAdjust="spacingAndGlyphs" xml:space="preserve" >Support: info@forex-ea.com</text>
<text x="1091.5" y="145" font-size="10" fill="#fff" textLength="65.5" lengthAdjust="spacingAndGlyphs" xml:space="preserve" >_Scalping_Ea_fix</text>
<g shape-rendering="geometricPrecision"><circle cx="1165.5" cy="142.2" r="5.3" fill="none" stroke="#fff" stroke-width="1.2"/><rect x="1162.8" y="139.5" width="1.6" height="1.6" fill="#fff"/><rect x="1166.6" y="139.5" width="1.6" height="1.6" fill="#fff"/><path d="M1162.3 143.2 q3.2 3.2 6.4 0" stroke="#fff" stroke-width="1.1" fill="none"/></g>
<path d="M2 654 V379 Q2 376 5 376 H407 Q410 376 410 379 V654 Z" fill="#d4e1f0" stroke="#3f3f3f" stroke-width="2" shape-rendering="geometricPrecision"/>
<rect x="4" y="378" width="405" height="30" fill="url(#gWin)" />
<rect x="3" y="379" width="1" height="274" fill="#eef4fb" />
<rect x="409" y="379" width="1" height="274" fill="#eef4fb" />
<rect x="4" y="377" width="405" height="1" fill="#eef4fb" />
<rect x="3" y="652" width="407" height="1" fill="#f4f8fc" />
<g shape-rendering="geometricPrecision"><rect x="13.6" y="387.6" width="10" height="8" fill="#fffef6" stroke="#4a7ff0" stroke-width="1.2"/><path d="M15.5 391.5 l1.5 -1.5 M19.5 390 l2 1.8" stroke="#4a7ff0" stroke-width="1.3" fill="none"/><rect x="16.6" y="392.6" width="10" height="8" fill="#fffef6" stroke="#4a7ff0" stroke-width="1.2"/><path d="M18.8 395.3 l1.5 2.6 l1.5 -2.8 l1.5 2.8 l1.5 -2.6" stroke="#4a7ff0" stroke-width="0.9" fill="none"/></g>
<text x="33" y="399" font-size="11" fill="#3a3a3a" textLength="62.1" lengthAdjust="spacingAndGlyphs" xml:space="preserve" >GBPUSD,M5</text>
<rect x="304.5" y="386.5" width="30" height="16" rx="2" fill="url(#gBtn)" stroke="#7d8ca6" shape-rendering="geometricPrecision"/>
<rect x="314.5" y="395.5" width="10" height="4" rx="1" fill="#fafafa" stroke="#333" stroke-width="1" shape-rendering="geometricPrecision"/>
<rect x="337.5" y="386.5" width="30" height="16" rx="2" fill="url(#gBtn)" stroke="#7d8ca6" shape-rendering="geometricPrecision"/>
<rect x="347.5" y="389.5" width="10" height="9" rx="1" fill="#fafafa" stroke="#333" stroke-width="1" shape-rendering="geometricPrecision"/>
<rect x="350.0" y="392.5" width="5" height="3" fill="none" stroke="#333" stroke-width="1" shape-rendering="geometricPrecision"/>
<rect x="370.5" y="386.5" width="30" height="16" rx="2" fill="url(#gBtn)" stroke="#7d8ca6" shape-rendering="geometricPrecision"/>
<path d="M381.7 391.5 L389.3 397.5 M389.3 391.5 L381.7 397.5" stroke="#333" stroke-width="4" stroke-linecap="round" shape-rendering="geometricPrecision"/>
<path d="M381.7 391.5 L389.3 397.5 M389.3 391.5 L381.7 397.5" stroke="#f4f4f4" stroke-width="2" stroke-linecap="round" shape-rendering="geometricPrecision"/>
<rect x="10" y="406" width="393" height="2" fill="#8a8a8a" />
<rect x="10" y="406" width="2" height="240" fill="#8a8a8a" />
<rect x="10" y="644" width="393" height="2" fill="#ffffff" />
<rect x="401" y="406" width="2" height="240" fill="#ffffff" />
<rect x="12" y="408" width="389" height="236" fill="#000" />
<rect x="15" y="502" width="1" height="17" fill="#00ff00" />
<rect x="273" y="431" width="1" height="37" fill="#00ff00" />
<rect x="275" y="445" width="1" height="51" fill="#00ff00" />
<rect x="277" y="463" width="1" height="117" fill="#00ff00" />
<rect x="279" y="541" width="1" height="67" fill="#00ff00" />
<rect x="281" y="566" width="1" height="51" fill="#00ff00" />
<rect x="283" y="526" width="1" height="64" fill="#00ff00" />
<rect x="285" y="526" width="1" height="25" fill="#00ff00" />
<rect x="14" y="539" width="345" height="1" fill="#ff0000" />
<rect x="14" y="545" width="345" height="1" fill="#778899" />
<path d="M45.5 411 V623" stroke="#fff" stroke-dasharray="3 2" />
<rect x="14.5" y="410.5" width="344" height="213" fill="none" stroke="#fff"/>
<rect x="359" y="416" width="2" height="1" fill="#fff" />
<text x="364.5" y="420" font-size="9.6" fill="#fff" textLength="31.7" lengthAdjust="spacingAndGlyphs" xml:space="preserve" >1.29405</text>
<rect x="359" y="450" width="2" height="1" fill="#fff" />
<text x="364.5" y="454" font-size="9.6" fill="#fff" textLength="31.7" lengthAdjust="spacingAndGlyphs" xml:space="preserve" >1.29355</text>
<rect x="359" y="484" width="2" height="1" fill="#fff" />
<text x="364.5" y="488" font-size="9.6" fill="#fff" textLength="31.7" lengthAdjust="spacingAndGlyphs" xml:space="preserve" >1.29305</text>
<rect x="359" y="518" width="2" height="1" fill="#fff" />
<text x="364.5" y="522" font-size="9.6" fill="#fff" textLength="31.7" lengthAdjust="spacingAndGlyphs" xml:space="preserve" >1.29255</text>
<rect x="359" y="552" width="2" height="1" fill="#fff" />
<text x="364.5" y="556" font-size="9.6" fill="#fff" textLength="31.7" lengthAdjust="spacingAndGlyphs" xml:space="preserve" >1.29205</text>
<rect x="359" y="585" width="2" height="1" fill="#fff" />
<text x="364.5" y="589" font-size="9.6" fill="#fff" textLength="31.7" lengthAdjust="spacingAndGlyphs" xml:space="preserve" >1.29155</text>
<rect x="359" y="619" width="2" height="1" fill="#fff" />
<text x="364.5" y="623" font-size="9.6" fill="#fff" textLength="31.7" lengthAdjust="spacingAndGlyphs" xml:space="preserve" >1.29105</text>
<rect x="361" y="534" width="39" height="11" fill="#ff0000" />
<text x="364.5" y="543" font-size="9.6" fill="#000" textLength="31.7" lengthAdjust="spacingAndGlyphs" xml:space="preserve" >1.29222</text>
<rect x="361" y="540" width="39" height="11" fill="#fff" />
<text x="364.5" y="549" font-size="9.6" fill="#000" textLength="31.7" lengthAdjust="spacingAndGlyphs" xml:space="preserve" >1.29214</text>
<rect x="15" y="623" width="1" height="4" fill="#fff" />
<text x="14" y="636" font-size="9.6" fill="#fff" textLength="46" lengthAdjust="spacingAndGlyphs" xml:space="preserve" >4 Sep 2017</text>
<rect x="79" y="623" width="1" height="4" fill="#fff" />
<text x="78" y="636" font-size="9.6" fill="#fff" textLength="50" lengthAdjust="spacingAndGlyphs" xml:space="preserve" >5 Sep 01:25</text>
<rect x="143" y="623" width="1" height="4" fill="#fff" />
<text x="142" y="636" font-size="9.6" fill="#fff" textLength="50" lengthAdjust="spacingAndGlyphs" xml:space="preserve" >5 Sep 04:05</text>
<rect x="207" y="623" width="1" height="4" fill="#fff" />
<text x="206" y="636" font-size="9.6" fill="#fff" textLength="50" lengthAdjust="spacingAndGlyphs" xml:space="preserve" >5 Sep 06:45</text>
<rect x="271" y="623" width="1" height="4" fill="#fff" />
<text x="270" y="636" font-size="9.6" fill="#fff" textLength="50" lengthAdjust="spacingAndGlyphs" xml:space="preserve" >5 Sep 09:25</text>
<g shape-rendering="geometricPrecision"><path d="M283 411 h10 l-5 4.5 z" fill="#7a8aa0"/></g>
<rect x="17" y="411" width="255" height="192" fill="#008080" />
<rect x="22" y="411" width="1" height="186" fill="#c8f0f0" />
<rect x="272" y="411" width="1" height="186" fill="#c8f0f0" />
<rect x="22" y="596" width="251" height="1" fill="#c8f0f0" />
<g shape-rendering="geometricPrecision"><path d="M18 417 h8 l-4 4.5 z" fill="#fff"/></g>
<text x="31" y="439.5" font-size="12" fill="#00ffff" textLength="212.6" lengthAdjust="spacingAndGlyphs" xml:space="preserve" >TerminalMonitor ON, 71ms, ~15ms</text>
<text x="31" y="458.5" font-size="12" fill="#ffffff" textLength="102" lengthAdjust="spacingAndGlyphs" xml:space="preserve" >Symbol: GBPUSD</text>
<text x="31" y="477.5" font-size="12" fill="#ffffff" textLength="67" lengthAdjust="spacingAndGlyphs" xml:space="preserve" >Spread: 0.8</text>
<text x="31" y="496.5" font-size="12" fill="#ffffff" textLength="50.6" lengthAdjust="spacingAndGlyphs" xml:space="preserve" >Lot: 0.07</text>
<text x="31" y="515.5" font-size="12" fill="#ffffff" textLength="83.3" lengthAdjust="spacingAndGlyphs" xml:space="preserve" >Leverage: 400</text>
<text x="31" y="534.5" font-size="12" fill="#ffffff" textLength="145.7" lengthAdjust="spacingAndGlyphs" xml:space="preserve" >VolumeOrderFlow: 1.50</text>
<text x="31" y="553.5" font-size="12" fill="#00ff00" textLength="123" lengthAdjust="spacingAndGlyphs" xml:space="preserve" >Work Demo Version</text>
<text x="53" y="572.5" font-size="12" fill="#00bfff" textLength="122.3" lengthAdjust="spacingAndGlyphs" xml:space="preserve" >Volume Scalping EA</text>
<text x="53" y="591.5" font-size="12" fill="#ffffff" textLength="175.5" lengthAdjust="spacingAndGlyphs" xml:space="preserve" >Support: info@forex-ea.com</text>
<text x="273.5" y="423" font-size="10" fill="#fff" textLength="65.5" lengthAdjust="spacingAndGlyphs" xml:space="preserve" >_Scalping_Ea_fix</text>
<g shape-rendering="geometricPrecision"><circle cx="347.5" cy="420.2" r="5.3" fill="none" stroke="#fff" stroke-width="1.2"/><rect x="344.8" y="417.5" width="1.6" height="1.6" fill="#fff"/><rect x="348.6" y="417.5" width="1.6" height="1.6" fill="#fff"/><path d="M344.3 421.2 q3.2 3.2 6.4 0" stroke="#fff" stroke-width="1.1" fill="none"/></g>
<path d="M411 654 V379 Q411 376 414 376 H816 Q819 376 819 379 V654 Z" fill="#d4e1f0" stroke="#3f3f3f" stroke-width="2" shape-rendering="geometricPrecision"/>
<rect x="413" y="378" width="405" height="30" fill="url(#gWin)" />
<rect x="412" y="379" width="1" height="274" fill="#eef4fb" />
<rect x="818" y="379" width="1" height="274" fill="#eef4fb" />
<rect x="413" y="377" width="405" height="1" fill="#eef4fb" />
<rect x="412" y="652" width="407" height="1" fill="#f4f8fc" />
<g shape-rendering="geometricPrecision"><rect x="422.6" y="387.6" width="10" height="8" fill="#fffef6" stroke="#4a7ff0" stroke-width="1.2"/><path d="M424.5 391.5 l1.5 -1.5 M428.5 390 l2 1.8" stroke="#4a7ff0" stroke-width="1.3" fill="none"/><rect x="425.6" y="392.6" width="10" height="8" fill="#fffef6" stroke="#4a7ff0" stroke-width="1.2"/><path d="M427.8 395.3 l1.5 2.6 l1.5 -2.8 l1.5 2.8 l1.5 -2.6" stroke="#4a7ff0" stroke-width="0.9" fill="none"/></g>
<text x="442" y="399" font-size="11" fill="#3a3a3a" textLength="62.1" lengthAdjust="spacingAndGlyphs" xml:space="preserve" >EURJPY,M5</text>
<rect x="713.5" y="386.5" width="30" height="16" rx="2" fill="url(#gBtn)" stroke="#7d8ca6" shape-rendering="geometricPrecision"/>
<rect x="723.5" y="395.5" width="10" height="4" rx="1" fill="#fafafa" stroke="#333" stroke-width="1" shape-rendering="geometricPrecision"/>
<rect x="746.5" y="386.5" width="30" height="16" rx="2" fill="url(#gBtn)" stroke="#7d8ca6" shape-rendering="geometricPrecision"/>
<rect x="756.5" y="389.5" width="10" height="9" rx="1" fill="#fafafa" stroke="#333" stroke-width="1" shape-rendering="geometricPrecision"/>
<rect x="759.0" y="392.5" width="5" height="3" fill="none" stroke="#333" stroke-width="1" shape-rendering="geometricPrecision"/>
<rect x="779.5" y="386.5" width="30" height="16" rx="2" fill="url(#gBtn)" stroke="#7d8ca6" shape-rendering="geometricPrecision"/>
<path d="M790.7 391.5 L798.3 397.5 M798.3 391.5 L790.7 397.5" stroke="#333" stroke-width="4" stroke-linecap="round" shape-rendering="geometricPrecision"/>
<path d="M790.7 391.5 L798.3 397.5 M798.3 391.5 L790.7 397.5" stroke="#f4f4f4" stroke-width="2" stroke-linecap="round" shape-rendering="geometricPrecision"/>
<rect x="419" y="406" width="393" height="2" fill="#8a8a8a" />
<rect x="419" y="406" width="2" height="240" fill="#8a8a8a" />
<rect x="419" y="644" width="393" height="2" fill="#ffffff" />
<rect x="810" y="406" width="2" height="240" fill="#ffffff" />
<rect x="421" y="408" width="389" height="236" fill="#000" />
<rect x="424" y="460" width="1" height="16" fill="#00ff00" />
<rect x="682" y="549" width="1" height="15" fill="#00ff00" />
<rect x="684" y="559" width="1" height="58" fill="#00ff00" />
<rect x="686" y="584" width="1" height="11" fill="#00ff00" />
<rect x="688" y="585" width="1" height="29" fill="#00ff00" />
<rect x="690" y="590" width="1" height="15" fill="#00ff00" />
<rect x="692" y="580" width="1" height="21" fill="#00ff00" />
<rect x="694" y="580" width="1" height="13" fill="#00ff00" />
<rect x="423" y="589" width="345" height="1" fill="#778899" />
<path d="M454.5 411 V623" stroke="#fff" stroke-dasharray="3 2" />
<rect x="423.5" y="410.5" width="344" height="213" fill="none" stroke="#fff"/>
<rect x="768" y="422" width="2" height="1" fill="#fff" />
<text x="773.5" y="426" font-size="9.6" fill="#fff" textLength="31.7" lengthAdjust="spacingAndGlyphs" xml:space="preserve" >130.640</text>
<rect x="768" y="455" width="2" height="1" fill="#fff" />
<text x="773.5" y="459" font-size="9.6" fill="#fff" textLength="31.7" lengthAdjust="spacingAndGlyphs" xml:space="preserve" >130.510</text>
<rect x="768" y="488" width="2" height="1" fill="#fff" />
<text x="773.5" y="492" font-size="9.6" fill="#fff" textLength="31.7" lengthAdjust="spacingAndGlyphs" xml:space="preserve" >130.380</text>
<rect x="768" y="521" width="2" height="1" fill="#fff" />
<text x="773.5" y="525" font-size="9.6" fill="#fff" textLength="31.7" lengthAdjust="spacingAndGlyphs" xml:space="preserve" >130.250</text>
<rect x="768" y="554" width="2" height="1" fill="#fff" />
<text x="773.5" y="558" font-size="9.6" fill="#fff" textLength="31.7" lengthAdjust="spacingAndGlyphs" xml:space="preserve" >130.120</text>
<rect x="768" y="587" width="2" height="1" fill="#fff" />
<text x="773.5" y="591" font-size="9.6" fill="#fff" textLength="31.7" lengthAdjust="spacingAndGlyphs" xml:space="preserve" >129.990</text>
<rect x="768" y="619" width="2" height="1" fill="#fff" />
<text x="773.5" y="623" font-size="9.6" fill="#fff" textLength="31.7" lengthAdjust="spacingAndGlyphs" xml:space="preserve" >129.860</text>
<rect x="770" y="584" width="39" height="11" fill="#fff" />
<text x="773.5" y="593" font-size="9.6" fill="#000" textLength="31.7" lengthAdjust="spacingAndGlyphs" xml:space="preserve" >129.982</text>
<rect x="424" y="623" width="1" height="4" fill="#fff" />
<text x="423" y="636" font-size="9.6" fill="#fff" textLength="46" lengthAdjust="spacingAndGlyphs" xml:space="preserve" >4 Sep 2017</text>
<rect x="488" y="623" width="1" height="4" fill="#fff" />
<text x="487" y="636" font-size="9.6" fill="#fff" textLength="50" lengthAdjust="spacingAndGlyphs" xml:space="preserve" >5 Sep 01:25</text>
<rect x="552" y="623" width="1" height="4" fill="#fff" />
<text x="551" y="636" font-size="9.6" fill="#fff" textLength="50" lengthAdjust="spacingAndGlyphs" xml:space="preserve" >5 Sep 04:05</text>
<rect x="616" y="623" width="1" height="4" fill="#fff" />
<text x="615" y="636" font-size="9.6" fill="#fff" textLength="50" lengthAdjust="spacingAndGlyphs" xml:space="preserve" >5 Sep 06:45</text>
<rect x="680" y="623" width="1" height="4" fill="#fff" />
<text x="679" y="636" font-size="9.6" fill="#fff" textLength="50" lengthAdjust="spacingAndGlyphs" xml:space="preserve" >5 Sep 09:25</text>
<g shape-rendering="geometricPrecision"><path d="M692 411 h10 l-5 4.5 z" fill="#7a8aa0"/></g>
<rect x="426" y="411" width="255" height="192" fill="#008080" />
<rect x="431" y="411" width="1" height="186" fill="#c8f0f0" />
<rect x="681" y="411" width="1" height="186" fill="#c8f0f0" />
<rect x="431" y="596" width="251" height="1" fill="#c8f0f0" />
<g shape-rendering="geometricPrecision"><path d="M427 417 h8 l-4 4.5 z" fill="#fff"/></g>
<text x="440" y="439.5" font-size="12" fill="#00ffff" textLength="212.8" lengthAdjust="spacingAndGlyphs" xml:space="preserve" >TerminalMonitor ON, 87ms, ~12ms</text>
<text x="440" y="458.5" font-size="12" fill="#ffffff" textLength="96.8" lengthAdjust="spacingAndGlyphs" xml:space="preserve" >Symbol: EURJPY</text>
<text x="440" y="477.5" font-size="12" fill="#ffffff" textLength="67" lengthAdjust="spacingAndGlyphs" xml:space="preserve" >Spread: 1.0</text>
<text x="440" y="496.5" font-size="12" fill="#ffffff" textLength="50.6" lengthAdjust="spacingAndGlyphs" xml:space="preserve" >Lot: 0.08</text>
<text x="440" y="515.5" font-size="12" fill="#ffffff" textLength="83.3" lengthAdjust="spacingAndGlyphs" xml:space="preserve" >Leverage: 400</text>
<text x="440" y="534.5" font-size="12" fill="#ffffff" textLength="145.7" lengthAdjust="spacingAndGlyphs" xml:space="preserve" >VolumeOrderFlow: 1.50</text>
<text x="440" y="553.5" font-size="12" fill="#00ff00" textLength="123" lengthAdjust="spacingAndGlyphs" xml:space="preserve" >Work Demo Version</text>
<text x="462" y="572.5" font-size="12" fill="#00bfff" textLength="122.3" lengthAdjust="spacingAndGlyphs" xml:space="preserve" >Volume Scalping EA</text>
<text x="462" y="591.5" font-size="12" fill="#ffffff" textLength="175.5" lengthAdjust="spacingAndGlyphs" xml:space="preserve" >Support: info@forex-ea.com</text>
<text x="682.5" y="423" font-size="10" fill="#fff" textLength="65.5" lengthAdjust="spacingAndGlyphs" xml:space="preserve" >_Scalping_Ea_fix</text>
<g shape-rendering="geometricPrecision"><circle cx="756.5" cy="420.2" r="5.3" fill="none" stroke="#fff" stroke-width="1.2"/><rect x="753.8" y="417.5" width="1.6" height="1.6" fill="#fff"/><rect x="757.6" y="417.5" width="1.6" height="1.6" fill="#fff"/><path d="M753.3 421.2 q3.2 3.2 6.4 0" stroke="#fff" stroke-width="1.1" fill="none"/></g>
<path d="M820 654 V379 Q820 376 823 376 H1225 Q1228 376 1228 379 V654 Z" fill="#d4e1f0" stroke="#3f3f3f" stroke-width="2" shape-rendering="geometricPrecision"/>
<rect x="822" y="378" width="405" height="30" fill="url(#gWin)" />
<rect x="821" y="379" width="1" height="274" fill="#eef4fb" />
<rect x="1227" y="379" width="1" height="274" fill="#eef4fb" />
<rect x="822" y="377" width="405" height="1" fill="#eef4fb" />
<rect x="821" y="652" width="407" height="1" fill="#f4f8fc" />
<g shape-rendering="geometricPrecision"><rect x="831.6" y="387.6" width="10" height="8" fill="#fffef6" stroke="#4a7ff0" stroke-width="1.2"/><path d="M833.5 391.5 l1.5 -1.5 M837.5 390 l2 1.8" stroke="#4a7ff0" stroke-width="1.3" fill="none"/><rect x="834.6" y="392.6" width="10" height="8" fill="#fffef6" stroke="#4a7ff0" stroke-width="1.2"/><path d="M836.8 395.3 l1.5 2.6 l1.5 -2.8 l1.5 2.8 l1.5 -2.6" stroke="#4a7ff0" stroke-width="0.9" fill="none"/></g>
<text x="851" y="399" font-size="11" fill="#3a3a3a" textLength="62.1" lengthAdjust="spacingAndGlyphs" xml:space="preserve" >GBPJPY,M5</text>
<rect x="1122.5" y="386.5" width="30" height="16" rx="2" fill="url(#gBtn)" stroke="#7d8ca6" shape-rendering="geometricPrecision"/>
<rect x="1132.5" y="395.5" width="10" height="4" rx="1" fill="#fafafa" stroke="#333" stroke-width="1" shape-rendering="geometricPrecision"/>
<rect x="1155.5" y="386.5" width="30" height="16" rx="2" fill="url(#gBtn)" stroke="#7d8ca6" shape-rendering="geometricPrecision"/>
<rect x="1165.5" y="389.5" width="10" height="9" rx="1" fill="#fafafa" stroke="#333" stroke-width="1" shape-rendering="geometricPrecision"/>
<rect x="1168.0" y="392.5" width="5" height="3" fill="none" stroke="#333" stroke-width="1" shape-rendering="geometricPrecision"/>
<rect x="1188.5" y="386.5" width="30" height="16" rx="2" fill="url(#gBtn)" stroke="#7d8ca6" shape-rendering="geometricPrecision"/>
<path d="M1199.7 391.5 L1207.3 397.5 M1207.3 391.5 L1199.7 397.5" stroke="#333" stroke-width="4" stroke-linecap="round" shape-rendering="geometricPrecision"/>
<path d="M1199.7 391.5 L1207.3 397.5 M1207.3 391.5 L1199.7 397.5" stroke="#f4f4f4" stroke-width="2" stroke-linecap="round" shape-rendering="geometricPrecision"/>
<rect x="828" y="406" width="393" height="2" fill="#8a8a8a" />
<rect x="828" y="406" width="2" height="240" fill="#8a8a8a" />
<rect x="828" y="644" width="393" height="2" fill="#ffffff" />
<rect x="1219" y="406" width="2" height="240" fill="#ffffff" />
<rect x="830" y="408" width="389" height="236" fill="#000" />
<rect x="833" y="453" width="1" height="23" fill="#00ff00" />
<rect x="835" y="453" width="1" height="12" fill="#00ff00" />
<rect x="837" y="439" width="1" height="27" fill="#00ff00" />
<rect x="839" y="448" width="1" height="46" fill="#00ff00" />
<rect x="841" y="451" width="1" height="30" fill="#00ff00" />
<rect x="843" y="465" width="1" height="18" fill="#00ff00" />
<rect x="845" y="463" width="1" height="14" fill="#00ff00" />
<rect x="847" y="460" width="1" height="7" fill="#00ff00" />
<rect x="849" y="446" width="1" height="15" fill="#00ff00" />
<rect x="851" y="444" width="1" height="17" fill="#00ff00" />
<rect x="853" y="446" width="1" height="11" fill="#00ff00" />
<rect x="855" y="443" width="1" height="17" fill="#00ff00" />
<rect x="857" y="448" width="1" height="8" fill="#00ff00" />
<rect x="859" y="444" width="1" height="9" fill="#00ff00" />
<rect x="861" y="444" width="1" height="21" fill="#00ff00" />
<rect x="863" y="442" width="1" height="26" fill="#00ff00" />
<rect x="865" y="449" width="1" height="10" fill="#00ff00" />
<rect x="867" y="451" width="1" height="6" fill="#00ff00" />
<rect x="869" y="451" width="1" height="11" fill="#00ff00" />
<rect x="871" y="452" width="1" height="9" fill="#00ff00" />
<rect x="873" y="448" width="1" height="11" fill="#00ff00" />
<rect x="875" y="447" width="1" height="6" fill="#00ff00" />
<rect x="877" y="444" width="1" height="18" fill="#00ff00" />
<rect x="879" y="451" width="1" height="8" fill="#00ff00" />
<rect x="881" y="453" width="1" height="9" fill="#00ff00" />
<rect x="883" y="451" width="1" height="15" fill="#00ff00" />
<rect x="885" y="457" width="1" height="9" fill="#00ff00" />
<rect x="887" y="450" width="1" height="15" fill="#00ff00" />
<rect x="889" y="456" width="1" height="10" fill="#00ff00" />
<rect x="891" y="454" width="1" height="9" fill="#00ff00" />
<rect x="893" y="453" width="1" height="12" fill="#00ff00" />
<rect x="895" y="444" width="1" height="12" fill="#00ff00" />
<rect x="897" y="439" width="1" height="12" fill="#00ff00" />
<rect x="899" y="435" width="1" height="12" fill="#00ff00" />
<rect x="901" y="432" width="1" height="16" fill="#00ff00" />
<rect x="903" y="428" width="1" height="9" fill="#00ff00" />
<rect x="905" y="423" width="1" height="15" fill="#00ff00" />
<rect x="907" y="423" width="1" height="14" fill="#00ff00" />
<rect x="909" y="424" width="1" height="12" fill="#00ff00" />
<rect x="911" y="431" width="1" height="22" fill="#00ff00" />
<rect x="913" y="441" width="1" height="16" fill="#00ff00" />
<rect x="915" y="443" width="1" height="13" fill="#00ff00" />
<rect x="917" y="442" width="1" height="9" fill="#00ff00" />
<rect x="919" y="446" width="1" height="22" fill="#00ff00" />
<rect x="921" y="453" width="1" height="9" fill="#00ff00" />
<rect x="923" y="456" width="1" height="19" fill="#00ff00" />
<rect x="925" y="447" width="1" height="18" fill="#00ff00" />
<rect x="927" y="448" width="1" height="7" fill="#00ff00" />
<rect x="929" y="448" width="1" height="13" fill="#00ff00" />
<rect x="931" y="450" width="1" height="39" fill="#00ff00" />
<rect x="933" y="477" width="1" height="37" fill="#00ff00" />
<rect x="935" y="506" width="1" height="30" fill="#00ff00" />
<rect x="937" y="516" width="1" height="19" fill="#00ff00" />
<rect x="939" y="514" width="1" height="11" fill="#00ff00" />
<rect x="941" y="512" width="1" height="15" fill="#00ff00" />
<rect x="943" y="507" width="1" height="13" fill="#00ff00" />
<rect x="945" y="504" width="1" height="15" fill="#00ff00" />
<rect x="947" y="507" width="1" height="13" fill="#00ff00" />
<rect x="949" y="510" width="1" height="11" fill="#00ff00" />
<rect x="951" y="514" width="1" height="22" fill="#00ff00" />
<rect x="953" y="518" width="1" height="10" fill="#00ff00" />
<rect x="955" y="520" width="1" height="15" fill="#00ff00" />
<rect x="957" y="514" width="1" height="15" fill="#00ff00" />
<rect x="959" y="514" width="1" height="11" fill="#00ff00" />
<rect x="961" y="516" width="1" height="16" fill="#00ff00" />
<rect x="963" y="522" width="1" height="17" fill="#00ff00" />
<rect x="965" y="531" width="1" height="86" fill="#00ff00" />
<rect x="967" y="584" width="1" height="23" fill="#00ff00" />
<rect x="969" y="580" width="1" height="17" fill="#00ff00" />
<rect x="971" y="582" width="1" height="25" fill="#00ff00" />
<rect x="973" y="578" width="1" height="21" fill="#00ff00" />
<rect x="975" y="576" width="1" height="15" fill="#00ff00" />
<rect x="977" y="581" width="1" height="19" fill="#00ff00" />
<rect x="979" y="570" width="1" height="21" fill="#00ff00" />
<rect x="981" y="578" width="1" height="12" fill="#00ff00" />
<rect x="983" y="576" width="1" height="14" fill="#00ff00" />
<rect x="985" y="578" width="1" height="21" fill="#00ff00" />
<rect x="987" y="589" width="1" height="24" fill="#00ff00" />
<rect x="989" y="583" width="1" height="23" fill="#00ff00" />
<rect x="991" y="595" width="1" height="13" fill="#00ff00" />
<rect x="993" y="598" width="1" height="15" fill="#00ff00" />
<rect x="995" y="589" width="1" height="19" fill="#00ff00" />
<rect x="997" y="587" width="1" height="9" fill="#00ff00" />
<rect x="999" y="586" width="1" height="10" fill="#00ff00" />
<rect x="1001" y="586" width="1" height="12" fill="#00ff00" />
<rect x="1003" y="583" width="1" height="15" fill="#00ff00" />
<rect x="1005" y="585" width="1" height="11" fill="#00ff00" />
<rect x="1007" y="588" width="1" height="14" fill="#00ff00" />
<rect x="1009" y="580" width="1" height="18" fill="#00ff00" />
<rect x="1011" y="575" width="1" height="12" fill="#00ff00" />
<rect x="1013" y="570" width="1" height="15" fill="#00ff00" />
<rect x="1015" y="566" width="1" height="12" fill="#00ff00" />
<rect x="1017" y="567" width="1" height="11" fill="#00ff00" />
<rect x="1019" y="573" width="1" height="18" fill="#00ff00" />
<rect x="1021" y="572" width="1" height="10" fill="#00ff00" />
<rect x="1023" y="566" width="1" height="13" fill="#00ff00" />
<rect x="1025" y="557" width="1" height="19" fill="#00ff00" />
<rect x="1027" y="563" width="1" height="13" fill="#00ff00" />
<rect x="1029" y="550" width="1" height="14" fill="#00ff00" />
<rect x="1031" y="553" width="1" height="10" fill="#00ff00" />
<rect x="1033" y="555" width="1" height="13" fill="#00ff00" />
<rect x="1035" y="549" width="1" height="11" fill="#00ff00" />
<rect x="1037" y="553" width="1" height="11" fill="#00ff00" />
<rect x="1039" y="558" width="1" height="30" fill="#00ff00" />
<rect x="1041" y="581" width="1" height="8" fill="#00ff00" />
<rect x="1043" y="576" width="1" height="11" fill="#00ff00" />
<rect x="1045" y="576" width="1" height="16" fill="#00ff00" />
<rect x="1047" y="582" width="1" height="11" fill="#00ff00" />
<rect x="1049" y="584" width="1" height="14" fill="#00ff00" />
<rect x="1051" y="586" width="1" height="11" fill="#00ff00" />
<rect x="1053" y="584" width="1" height="13" fill="#00ff00" />
<rect x="1055" y="573" width="1" height="23" fill="#00ff00" />
<rect x="1057" y="565" width="1" height="18" fill="#00ff00" />
<rect x="1059" y="554" width="1" height="18" fill="#00ff00" />
<rect x="1061" y="554" width="1" height="14" fill="#00ff00" />
<rect x="1063" y="560" width="1" height="16" fill="#00ff00" />
<rect x="1065" y="570" width="1" height="16" fill="#00ff00" />
<rect x="1067" y="575" width="1" height="28" fill="#00ff00" />
<rect x="1069" y="585" width="1" height="18" fill="#00ff00" />
<rect x="1071" y="578" width="1" height="12" fill="#00ff00" />
<rect x="1073" y="566" width="1" height="22" fill="#00ff00" />
<rect x="1075" y="566" width="1" height="27" fill="#00ff00" />
<rect x="1077" y="584" width="1" height="23" fill="#00ff00" />
<rect x="1079" y="557" width="1" height="31" fill="#00ff00" />
<rect x="1081" y="544" width="1" height="30" fill="#00ff00" />
<rect x="1083" y="538" width="1" height="18" fill="#00ff00" />
<rect x="1085" y="527" width="1" height="20" fill="#00ff00" />
<rect x="1087" y="528" width="1" height="21" fill="#00ff00" />
<rect x="1089" y="532" width="1" height="21" fill="#00ff00" />
<rect x="1091" y="529" width="1" height="21" fill="#00ff00" />
<rect x="1093" y="534" width="1" height="23" fill="#00ff00" />
<rect x="1095" y="534" width="1" height="48" fill="#00ff00" />
<rect x="1097" y="558" width="1" height="23" fill="#00ff00" />
<rect x="1099" y="561" width="1" height="20" fill="#00ff00" />
<rect x="1101" y="549" width="1" height="29" fill="#00ff00" />
<rect x="1103" y="548" width="1" height="21" fill="#00ff00" />
<rect x="832" y="558" width="345" height="1" fill="#ff0000" />
<rect x="832" y="564" width="345" height="1" fill="#778899" />
<path d="M863.5 411 V623" stroke="#fff" stroke-dasharray="3 2" />
<rect x="832.5" y="410.5" width="344" height="213" fill="none" stroke="#fff"/>
<rect x="1177" y="421" width="2" height="1" fill="#fff" />
<text x="1182.5" y="425" font-size="9.6" fill="#fff" textLength="31.7" lengthAdjust="spacingAndGlyphs" xml:space="preserve" >141.935</text>
<rect x="1177" y="455" width="2" height="1" fill="#fff" />
<text x="1182.5" y="459" font-size="9.6" fill="#fff" textLength="31.7" lengthAdjust="spacingAndGlyphs" xml:space="preserve" >141.805</text>
<rect x="1177" y="488" width="2" height="1" fill="#fff" />
<text x="1182.5" y="492" font-size="9.6" fill="#fff" textLength="31.7" lengthAdjust="spacingAndGlyphs" xml:space="preserve" >141.680</text>
<rect x="1177" y="521" width="2" height="1" fill="#fff" />
<text x="1182.5" y="525" font-size="9.6" fill="#fff" textLength="31.7" lengthAdjust="spacingAndGlyphs" xml:space="preserve" >141.555</text>
<rect x="1177" y="554" width="2" height="1" fill="#fff" />
<text x="1182.5" y="558" font-size="9.6" fill="#fff" textLength="31.7" lengthAdjust="spacingAndGlyphs" xml:space="preserve" >141.435</text>
<rect x="1177" y="587" width="2" height="1" fill="#fff" />
<text x="1182.5" y="591" font-size="9.6" fill="#fff" textLength="31.7" lengthAdjust="spacingAndGlyphs" xml:space="preserve" >141.295</text>
<rect x="1177" y="620" width="2" height="1" fill="#fff" />
<text x="1182.5" y="624" font-size="9.6" fill="#fff" textLength="31.7" lengthAdjust="spacingAndGlyphs" xml:space="preserve" >141.170</text>
<rect x="1179" y="553" width="39" height="11" fill="#ff0000" />
<text x="1182.5" y="562" font-size="9.6" fill="#000" textLength="31.7" lengthAdjust="spacingAndGlyphs" xml:space="preserve" >141.405</text>
<rect x="1179" y="559" width="39" height="11" fill="#fff" />
<text x="1182.5" y="568" font-size="9.6" fill="#000" textLength="31.7" lengthAdjust="spacingAndGlyphs" xml:space="preserve" >141.386</text>
<rect x="833" y="623" width="1" height="4" fill="#fff" />
<text x="832" y="636" font-size="9.6" fill="#fff" textLength="46" lengthAdjust="spacingAndGlyphs" xml:space="preserve" >4 Sep 2017</text>
<rect x="897" y="623" width="1" height="4" fill="#fff" />
<text x="896" y="636" font-size="9.6" fill="#fff" textLength="50" lengthAdjust="spacingAndGlyphs" xml:space="preserve" >5 Sep 01:25</text>
<rect x="961" y="623" width="1" height="4" fill="#fff" />
<text x="960" y="636" font-size="9.6" fill="#fff" textLength="50" lengthAdjust="spacingAndGlyphs" xml:space="preserve" >5 Sep 04:05</text>
<rect x="1025" y="623" width="1" height="4" fill="#fff" />
<text x="1024" y="636" font-size="9.6" fill="#fff" textLength="50" lengthAdjust="spacingAndGlyphs" xml:space="preserve" >5 Sep 06:45</text>
<rect x="1089" y="623" width="1" height="4" fill="#fff" />
<text x="1088" y="636" font-size="9.6" fill="#fff" textLength="50" lengthAdjust="spacingAndGlyphs" xml:space="preserve" >5 Sep 09:25</text>
<g shape-rendering="geometricPrecision"><path d="M1101 411 h10 l-5 4.5 z" fill="#7a8aa0"/></g>
<g shape-rendering="geometricPrecision"><path d="M836 417 h7 l-3.5 4 z" fill="#fff"/></g>
<text x="847" y="422" font-size="9.5" fill="#fff" textLength="197" lengthAdjust="spacingAndGlyphs" xml:space="preserve" >GBPJPY,M5  141.435 141.445 141.369 141.386</text>
<rect x="0" y="741" width="1279" height="1" fill="#ffffff" />
<rect x="0" y="742" width="1279" height="1" fill="#ffffff" />
<rect x="0" y="743" width="1279" height="1" fill="#000000" />
<rect x="0" y="744" width="1279" height="19" fill="#f0f0f0" />
<rect x="0" y="744" width="1" height="19" fill="#a0a0a0" />
<text x="16.4" y="757" font-size="11" fill="#6d6d6d" textLength="61.6" lengthAdjust="spacingAndGlyphs" xml:space="preserve" >EURUSD,M5</text>
<text x="102" y="757" font-size="11" fill="#6d6d6d" textLength="63" lengthAdjust="spacingAndGlyphs" xml:space="preserve" >GBPUSD,M5</text>
<text x="190" y="757" font-size="11" fill="#6d6d6d" textLength="59" lengthAdjust="spacingAndGlyphs" xml:space="preserve" >USDJPY,M5</text>
<text x="272" y="757" font-size="11" fill="#6d6d6d" textLength="58" lengthAdjust="spacingAndGlyphs" xml:space="preserve" >EURJPY,M5</text>
<text x="353.5" y="757" font-size="11" fill="#6d6d6d" textLength="65.5" lengthAdjust="spacingAndGlyphs" xml:space="preserve" >USDCAD,M5</text>
<rect x="90" y="746" width="1" height="15" fill="#808080" />
<rect x="178" y="746" width="1" height="15" fill="#808080" />
<rect x="262" y="746" width="1" height="15" fill="#808080" />
<rect x="342" y="746" width="1" height="15" fill="#808080" />
<rect x="430" y="743" width="84" height="18" fill="#ffffff" />
<rect x="430" y="743" width="1" height="19" fill="#000" />
<rect x="513" y="743" width="1" height="19" fill="#000" />
<rect x="430" y="761" width="84" height="1" fill="#000" />
<rect x="431" y="762" width="84" height="1" fill="#8a8a8a" />
<text x="443" y="756.5" font-size="11" fill="#000" textLength="58" lengthAdjust="spacingAndGlyphs" xml:space="preserve" >GBPJPY,M5</text>
<g shape-rendering="geometricPrecision"><path d="M1247.5 752.5 l4 -3.5 v7 z" fill="#b0b0b0"/><path d="M1271 752.5 l-4 -3.5 v7 z" fill="#b0b0b0"/></g>
<rect x="0" y="763" width="1279" height="1" fill="#ffffff" />
<rect x="0" y="764" width="1279" height="1" fill="#e8e8e8" />
<rect x="0" y="765" width="1279" height="195" fill="#f0f0f0" />
<g shape-rendering="geometricPrecision"><path d="M4.5 770 l5.5 5.5 M10 770 l-5.5 5.5" stroke="#000" stroke-width="1.6"/></g>
<rect x="1" y="781" width="13" height="176" fill="#94b0d2" />
<text transform="translate(11.7,955) rotate(-90)" font-size="11.5" fill="#000" textLength="48.5" lengthAdjust="spacingAndGlyphs">Терминал</text>
<rect x="15" y="767" width="1" height="190" fill="#9c9c9c" />
<rect x="16" y="768" width="1243" height="167" fill="#ffffff" />
<rect x="15" y="767" width="1245" height="1" fill="#a0a0a0" />
<rect x="16" y="768" width="1243" height="23" fill="url(#gHdr)" />
<rect x="16" y="790" width="1243" height="1" fill="#d5d5d5" />
<rect x="16" y="791" width="1243" height="1" fill="#ffffff" />
<rect x="101" y="768" width="1" height="22" fill="#e3e3e3" />
<rect x="248" y="768" width="1" height="22" fill="#e3e3e3" />
<rect x="313" y="768" width="1" height="22" fill="#e3e3e3" />
<rect x="366" y="768" width="1" height="22" fill="#e3e3e3" />
<rect x="432" y="768" width="1" height="22" fill="#e3e3e3" />
<rect x="498" y="768" width="1" height="22" fill="#e3e3e3" />
<rect x="564" y="768" width="1" height="22" fill="#e3e3e3" />
<rect x="630" y="768" width="1" height="22" fill="#e3e3e3" />
<rect x="777" y="768" width="1" height="22" fill="#e3e3e3" />
<rect x="844" y="768" width="1" height="22" fill="#e3e3e3" />
<rect x="910" y="768" width="1" height="22" fill="#e3e3e3" />
<rect x="975" y="768" width="1" height="22" fill="#e3e3e3" />
<rect x="1049" y="768" width="1" height="22" fill="#e3e3e3" />
<text x="22.5" y="784" font-size="11.5" fill="#000" xml:space="preserve" >Ордер</text>
<text x="242" y="784" font-size="11.5" fill="#000" text-anchor="end" xml:space="preserve" >Время</text>
<text x="307" y="784" font-size="11.5" fill="#000" text-anchor="end" xml:space="preserve" >Тип</text>
<text x="360" y="784" font-size="11.5" fill="#000" text-anchor="end" xml:space="preserve" >Объем</text>
<text x="426" y="784" font-size="11.5" fill="#000" text-anchor="end" xml:space="preserve" >Символ</text>
<text x="492" y="784" font-size="11.5" fill="#000" text-anchor="end" xml:space="preserve" >Цена</text>
<text x="558" y="784" font-size="11.5" fill="#000" text-anchor="end" xml:space="preserve" >S / L</text>
<text x="624" y="784" font-size="11.5" fill="#000" text-anchor="end" xml:space="preserve" >T / P</text>
<text x="771" y="784" font-size="11.5" fill="#000" text-anchor="end" xml:space="preserve" >Время</text>
<text x="838" y="784" font-size="11.5" fill="#000" text-anchor="end" xml:space="preserve" >Цена</text>
<text x="853" y="784" font-size="11.5" fill="#000" xml:space="preserve" >Комисс...</text>
<text x="969" y="784" font-size="11.5" fill="#000" text-anchor="end" xml:space="preserve" >Своп</text>
<text x="1043" y="784" font-size="11.5" fill="#000" text-anchor="end" xml:space="preserve" >Прибыль</text>
<text x="1253" y="784" font-size="11.5" fill="#000" text-anchor="end" xml:space="preserve" >Комментарий</text>
<text x="69" y="784" font-size="9" fill="#888" xml:space="preserve" >/</text>
<rect x="16" y="792" width="1243" height="20" fill="#ececec" />
<rect x="16" y="792" width="1243" height="1" fill="#d2d2d2" />
<rect x="100" y="792" width="1" height="20" fill="#d6d6d6" />
<rect x="247" y="792" width="1" height="20" fill="#d6d6d6" />
<rect x="312" y="792" width="1" height="20" fill="#d6d6d6" />
<rect x="365" y="792" width="1" height="20" fill="#d6d6d6" />
<rect x="431" y="792" width="1" height="20" fill="#d6d6d6" />
<rect x="497" y="792" width="1" height="20" fill="#d6d6d6" />
<rect x="563" y="792" width="1" height="20" fill="#d6d6d6" />
<rect x="629" y="792" width="1" height="20" fill="#d6d6d6" />
<rect x="776" y="792" width="1" height="20" fill="#d6d6d6" />
<rect x="843" y="792" width="1" height="20" fill="#d6d6d6" />
<rect x="909" y="792" width="1" height="20" fill="#d6d6d6" />
<rect x="974" y="792" width="1" height="20" fill="#d6d6d6" />
<rect x="1048" y="792" width="1" height="20" fill="#d6d6d6" />
<g shape-rendering="geometricPrecision"><path d="M19.6 795.6 h7.6 l3.2 3.2 v9.8 h-10.8 z" fill="url(#gDoc)" stroke="#474747" stroke-width="1.2"/><path d="M27.2 795.6 v3.2 h3.2" fill="none" stroke="#474747" stroke-width="1.1"/></g>
<g shape-rendering="geometricPrecision"><circle cx="29.4" cy="806.2" r="3.5" fill="#1e9ae8" stroke="#0c3f6e" stroke-width="1"/><circle cx="28.4" cy="805.2" r="1.2" fill="#ffffff" fill-opacity="0.55"/></g>
<text x="38.5" y="806" font-size="12" fill="#000000" textLength="53" lengthAdjust="spacingAndGlyphs" xml:space="preserve" >227363403</text>
<text x="244" y="806" font-size="12" fill="#000000" textLength="95.3" lengthAdjust="spacingAndGlyphs" text-anchor="end" xml:space="preserve" >2017.09.04 16:01:07</text>
<text x="309" y="806" font-size="12" fill="#000000" textLength="18.6" lengthAdjust="spacingAndGlyphs" text-anchor="end" xml:space="preserve" >buy</text>
<text x="362" y="806" font-size="12" fill="#000000" textLength="20.2" lengthAdjust="spacingAndGlyphs" text-anchor="end" xml:space="preserve" >0.00</text>
<text x="428" y="806" font-size="12" fill="#000000" textLength="35.3" lengthAdjust="spacingAndGlyphs" text-anchor="end" xml:space="preserve" >eurusd</text>
<text x="494" y="806" font-size="12" fill="#000000" textLength="37.4" lengthAdjust="spacingAndGlyphs" text-anchor="end" xml:space="preserve" >1.19025</text>
<text x="560" y="806" font-size="12" fill="#000000" textLength="37.4" lengthAdjust="spacingAndGlyphs" text-anchor="end" xml:space="preserve" >0.00000</text>
<text x="626" y="806" font-size="12" fill="#000000" textLength="37.4" lengthAdjust="spacingAndGlyphs" text-anchor="end" xml:space="preserve" >0.00000</text>
<text x="773" y="806" font-size="12" fill="#000000" textLength="95.3" lengthAdjust="spacingAndGlyphs" text-anchor="end" xml:space="preserve" >2017.09.04 16:21:09</text>
<text x="840" y="806" font-size="12" fill="#000000" textLength="37.4" lengthAdjust="spacingAndGlyphs" text-anchor="end" xml:space="preserve" >1.19025</text>
<text x="906" y="806" font-size="12" fill="#000000" textLength="20.2" lengthAdjust="spacingAndGlyphs" text-anchor="end" xml:space="preserve" >0.00</text>
<text x="971" y="806" font-size="12" fill="#000000" textLength="20.2" lengthAdjust="spacingAndGlyphs" text-anchor="end" xml:space="preserve" >0.00</text>
<text x="1045" y="806" font-size="12" fill="#000000" textLength="20.2" lengthAdjust="spacingAndGlyphs" text-anchor="end" xml:space="preserve" >0.00</text>
<text x="1255" y="806" font-size="12" fill="#000000" textLength="139.2" lengthAdjust="spacingAndGlyphs" text-anchor="end" xml:space="preserve" >close hedge by #227363421</text>
<rect x="16" y="812" width="1243" height="21" fill="#3399ff" />
<g shape-rendering="geometricPrecision"><path d="M19.6 815.6 h7.6 l3.2 3.2 v9.8 h-10.8 z" fill="url(#gDoc)" stroke="#474747" stroke-width="1.2"/><path d="M27.2 815.6 v3.2 h3.2" fill="none" stroke="#474747" stroke-width="1.1"/></g>
<g shape-rendering="geometricPrecision"><circle cx="29.4" cy="826.2" r="3.5" fill="#ee4a12" stroke="#6e1d05" stroke-width="1"/><circle cx="28.4" cy="825.2" r="1.2" fill="#ffffff" fill-opacity="0.55"/></g>
<text x="38.5" y="826" font-size="12" fill="#ffffff" textLength="53" lengthAdjust="spacingAndGlyphs" xml:space="preserve" >227363421</text>
<text x="244" y="826" font-size="12" fill="#ffffff" textLength="95.3" lengthAdjust="spacingAndGlyphs" text-anchor="end" xml:space="preserve" >2017.09.04 16:01:08</text>
<text x="309" y="826" font-size="12" fill="#ffffff" textLength="17.3" lengthAdjust="spacingAndGlyphs" text-anchor="end" xml:space="preserve" >sell</text>
<text x="362" y="826" font-size="12" fill="#ffffff" textLength="20.2" lengthAdjust="spacingAndGlyphs" text-anchor="end" xml:space="preserve" >0.07</text>
<text x="428" y="826" font-size="12" fill="#ffffff" textLength="35.3" lengthAdjust="spacingAndGlyphs" text-anchor="end" xml:space="preserve" >eurusd</text>
<text x="494" y="826" font-size="12" fill="#ffffff" textLength="37.4" lengthAdjust="spacingAndGlyphs" text-anchor="end" xml:space="preserve" >1.19037</text>
<text x="560" y="826" font-size="12" fill="#ffffff" textLength="37.4" lengthAdjust="spacingAndGlyphs" text-anchor="end" xml:space="preserve" >0.00000</text>
<text x="626" y="826" font-size="12" fill="#ffffff" textLength="37.4" lengthAdjust="spacingAndGlyphs" text-anchor="end" xml:space="preserve" >0.00000</text>
<text x="773" y="826" font-size="12" fill="#ffffff" textLength="95.3" lengthAdjust="spacingAndGlyphs" text-anchor="end" xml:space="preserve" >2017.09.04 16:21:09</text>
<text x="840" y="826" font-size="12" fill="#ffffff" textLength="37.4" lengthAdjust="spacingAndGlyphs" text-anchor="end" xml:space="preserve" >1.19025</text>
<text x="906" y="826" font-size="12" fill="#ffffff" textLength="20.2" lengthAdjust="spacingAndGlyphs" text-anchor="end" xml:space="preserve" >0.00</text>
<text x="971" y="826" font-size="12" fill="#ffffff" textLength="20.2" lengthAdjust="spacingAndGlyphs" text-anchor="end" xml:space="preserve" >0.00</text>
<text x="1045" y="826" font-size="12" fill="#ffffff" textLength="20.2" lengthAdjust="spacingAndGlyphs" text-anchor="end" xml:space="preserve" >0.84</text>
<text x="1255" y="826" font-size="12" fill="#ffffff" textLength="47.5" lengthAdjust="spacingAndGlyphs" text-anchor="end" xml:space="preserve" >VirtualTP</text>
<rect x="16" y="832" width="1243" height="20" fill="#ececec" />
<rect x="100" y="832" width="1" height="20" fill="#d6d6d6" />
<rect x="247" y="832" width="1" height="20" fill="#d6d6d6" />
<rect x="312" y="832" width="1" height="20" fill="#d6d6d6" />
<rect x="365" y="832" width="1" height="20" fill="#d6d6d6" />
<rect x="431" y="832" width="1" height="20" fill="#d6d6d6" />
<rect x="497" y="832" width="1" height="20" fill="#d6d6d6" />
<rect x="563" y="832" width="1" height="20" fill="#d6d6d6" />
<rect x="629" y="832" width="1" height="20" fill="#d6d6d6" />
<rect x="776" y="832" width="1" height="20" fill="#d6d6d6" />
<rect x="843" y="832" width="1" height="20" fill="#d6d6d6" />
<rect x="909" y="832" width="1" height="20" fill="#d6d6d6" />
<rect x="974" y="832" width="1" height="20" fill="#d6d6d6" />
<rect x="1048" y="832" width="1" height="20" fill="#d6d6d6" />
<g shape-rendering="geometricPrecision"><path d="M19.6 835.6 h7.6 l3.2 3.2 v9.8 h-10.8 z" fill="url(#gDoc)" stroke="#474747" stroke-width="1.2"/><path d="M27.2 835.6 v3.2 h3.2" fill="none" stroke="#474747" stroke-width="1.1"/></g>
<g shape-rendering="geometricPrecision"><circle cx="29.4" cy="846.2" r="3.5" fill="#ee4a12" stroke="#6e1d05" stroke-width="1"/><circle cx="28.4" cy="845.2" r="1.2" fill="#ffffff" fill-opacity="0.55"/></g>
<text x="38.5" y="846" font-size="12" fill="#000000" textLength="53" lengthAdjust="spacingAndGlyphs" xml:space="preserve" >227611883</text>
<text x="244" y="846" font-size="12" fill="#000000" textLength="95.3" lengthAdjust="spacingAndGlyphs" text-anchor="end" xml:space="preserve" >2017.09.05 09:36:32</text>
<text x="309" y="846" font-size="12" fill="#000000" textLength="17.3" lengthAdjust="spacingAndGlyphs" text-anchor="end" xml:space="preserve" >sell</text>
<text x="362" y="846" font-size="12" fill="#000000" textLength="20.2" lengthAdjust="spacingAndGlyphs" text-anchor="end" xml:space="preserve" >0.07</text>
<text x="428" y="846" font-size="12" fill="#000000" textLength="35.3" lengthAdjust="spacingAndGlyphs" text-anchor="end" xml:space="preserve" >eurusd</text>
<text x="494" y="846" font-size="12" fill="#000000" textLength="37.4" lengthAdjust="spacingAndGlyphs" text-anchor="end" xml:space="preserve" >1.18884</text>
<text x="560" y="846" font-size="12" fill="#000000" textLength="37.4" lengthAdjust="spacingAndGlyphs" text-anchor="end" xml:space="preserve" >0.00000</text>
<text x="626" y="846" font-size="12" fill="#000000" textLength="37.4" lengthAdjust="spacingAndGlyphs" text-anchor="end" xml:space="preserve" >0.00000</text>
<text x="773" y="846" font-size="12" fill="#000000" textLength="95.3" lengthAdjust="spacingAndGlyphs" text-anchor="end" xml:space="preserve" >2017.09.05 09:37:42</text>
<text x="840" y="846" font-size="12" fill="#000000" textLength="37.4" lengthAdjust="spacingAndGlyphs" text-anchor="end" xml:space="preserve" >1.18801</text>
<text x="906" y="846" font-size="12" fill="#000000" textLength="20.2" lengthAdjust="spacingAndGlyphs" text-anchor="end" xml:space="preserve" >0.00</text>
<text x="971" y="846" font-size="12" fill="#000000" textLength="20.2" lengthAdjust="spacingAndGlyphs" text-anchor="end" xml:space="preserve" >0.00</text>
<text x="1045" y="846" font-size="12" fill="#000000" textLength="20.2" lengthAdjust="spacingAndGlyphs" text-anchor="end" xml:space="preserve" >5.81</text>
<text x="1255" y="846" font-size="12" fill="#000000" textLength="14.4" lengthAdjust="spacingAndGlyphs" text-anchor="end" xml:space="preserve" >0.4</text>
<rect x="16" y="852" width="1243" height="20" fill="#ffffff" />
<rect x="16" y="852" width="1243" height="1" fill="#d2d2d2" />
<rect x="100" y="852" width="1" height="20" fill="#d6d6d6" />
<rect x="247" y="852" width="1" height="20" fill="#d6d6d6" />
<rect x="312" y="852" width="1" height="20" fill="#d6d6d6" />
<rect x="365" y="852" width="1" height="20" fill="#d6d6d6" />
<rect x="431" y="852" width="1" height="20" fill="#d6d6d6" />
<rect x="497" y="852" width="1" height="20" fill="#d6d6d6" />
<rect x="563" y="852" width="1" height="20" fill="#d6d6d6" />
<rect x="629" y="852" width="1" height="20" fill="#d6d6d6" />
<rect x="776" y="852" width="1" height="20" fill="#d6d6d6" />
<rect x="843" y="852" width="1" height="20" fill="#d6d6d6" />
<rect x="909" y="852" width="1" height="20" fill="#d6d6d6" />
<rect x="974" y="852" width="1" height="20" fill="#d6d6d6" />
<rect x="1048" y="852" width="1" height="20" fill="#d6d6d6" />
<g shape-rendering="geometricPrecision"><path d="M19.6 855.6 h7.6 l3.2 3.2 v9.8 h-10.8 z" fill="url(#gDoc)" stroke="#474747" stroke-width="1.2"/><path d="M27.2 855.6 v3.2 h3.2" fill="none" stroke="#474747" stroke-width="1.1"/></g>
<g shape-rendering="geometricPrecision"><circle cx="29.4" cy="866.2" r="3.5" fill="#1e9ae8" stroke="#0c3f6e" stroke-width="1"/><circle cx="28.4" cy="865.2" r="1.2" fill="#ffffff" fill-opacity="0.55"/></g>
<text x="38.5" y="866" font-size="12" fill="#000000" textLength="53" lengthAdjust="spacingAndGlyphs" xml:space="preserve" >227612036</text>
<text x="244" y="866" font-size="12" fill="#000000" textLength="95.3" lengthAdjust="spacingAndGlyphs" text-anchor="end" xml:space="preserve" >2017.09.05 09:36:33</text>
<text x="309" y="866" font-size="12" fill="#000000" textLength="18.6" lengthAdjust="spacingAndGlyphs" text-anchor="end" xml:space="preserve" >buy</text>
<text x="362" y="866" font-size="12" fill="#000000" textLength="20.2" lengthAdjust="spacingAndGlyphs" text-anchor="end" xml:space="preserve" >0.07</text>
<text x="428" y="866" font-size="12" fill="#000000" textLength="35.3" lengthAdjust="spacingAndGlyphs" text-anchor="end" xml:space="preserve" >eurusd</text>
<text x="494" y="866" font-size="12" fill="#000000" textLength="37.4" lengthAdjust="spacingAndGlyphs" text-anchor="end" xml:space="preserve" >1.18857</text>
<text x="560" y="866" font-size="12" fill="#000000" textLength="37.4" lengthAdjust="spacingAndGlyphs" text-anchor="end" xml:space="preserve" >0.00000</text>
<text x="626" y="866" font-size="12" fill="#000000" textLength="37.4" lengthAdjust="spacingAndGlyphs" text-anchor="end" xml:space="preserve" >0.00000</text>
<text x="773" y="866" font-size="12" fill="#000000" textLength="95.3" lengthAdjust="spacingAndGlyphs" text-anchor="end" xml:space="preserve" >2017.09.05 09:37:35</text>
<text x="840" y="866" font-size="12" fill="#000000" textLength="37.4" lengthAdjust="spacingAndGlyphs" text-anchor="end" xml:space="preserve" >1.18728</text>
<text x="906" y="866" font-size="12" fill="#000000" textLength="20.2" lengthAdjust="spacingAndGlyphs" text-anchor="end" xml:space="preserve" >0.00</text>
<text x="971" y="866" font-size="12" fill="#000000" textLength="20.2" lengthAdjust="spacingAndGlyphs" text-anchor="end" xml:space="preserve" >0.00</text>
<text x="1045" y="866" font-size="12" fill="#000000" textLength="23.6" lengthAdjust="spacingAndGlyphs" text-anchor="end" xml:space="preserve" >-9.03</text>
<text x="1255" y="866" font-size="12" fill="#000000" textLength="47.5" lengthAdjust="spacingAndGlyphs" text-anchor="end" xml:space="preserve" >VirtualTP</text>
<rect x="16" y="872" width="1243" height="20" fill="#ececec" />
<rect x="16" y="872" width="1243" height="1" fill="#d2d2d2" />
<rect x="100" y="872" width="1" height="20" fill="#d6d6d6" />
<rect x="247" y="872" width="1" height="20" fill="#d6d6d6" />
<rect x="312" y="872" width="1" height="20" fill="#d6d6d6" />
<rect x="365" y="872" width="1" height="20" fill="#d6d6d6" />
<rect x="431" y="872" width="1" height="20" fill="#d6d6d6" />
<rect x="497" y="872" width="1" height="20" fill="#d6d6d6" />
<rect x="563" y="872" width="1" height="20" fill="#d6d6d6" />
<rect x="629" y="872" width="1" height="20" fill="#d6d6d6" />
<rect x="776" y="872" width="1" height="20" fill="#d6d6d6" />
<rect x="843" y="872" width="1" height="20" fill="#d6d6d6" />
<rect x="909" y="872" width="1" height="20" fill="#d6d6d6" />
<rect x="974" y="872" width="1" height="20" fill="#d6d6d6" />
<rect x="1048" y="872" width="1" height="20" fill="#d6d6d6" />
<g shape-rendering="geometricPrecision"><path d="M19.6 875.6 h7.6 l3.2 3.2 v9.8 h-10.8 z" fill="url(#gDoc)" stroke="#474747" stroke-width="1.2"/><path d="M27.2 875.6 v3.2 h3.2" fill="none" stroke="#474747" stroke-width="1.1"/></g>
<g shape-rendering="geometricPrecision"><circle cx="29.4" cy="886.2" r="3.5" fill="#ee4a12" stroke="#6e1d05" stroke-width="1"/><circle cx="28.4" cy="885.2" r="1.2" fill="#ffffff" fill-opacity="0.55"/></g>
<text x="38.5" y="886" font-size="12" fill="#000000" textLength="53" lengthAdjust="spacingAndGlyphs" xml:space="preserve" >227613828</text>
<text x="244" y="886" font-size="12" fill="#000000" textLength="95.3" lengthAdjust="spacingAndGlyphs" text-anchor="end" xml:space="preserve" >2017.09.05 09:37:35</text>
<text x="309" y="886" font-size="12" fill="#000000" textLength="17.3" lengthAdjust="spacingAndGlyphs" text-anchor="end" xml:space="preserve" >sell</text>
<text x="362" y="886" font-size="12" fill="#000000" textLength="20.2" lengthAdjust="spacingAndGlyphs" text-anchor="end" xml:space="preserve" >0.08</text>
<text x="428" y="886" font-size="12" fill="#000000" textLength="31.5" lengthAdjust="spacingAndGlyphs" text-anchor="end" xml:space="preserve" >eurjpy</text>
<text x="494" y="886" font-size="12" fill="#000000" textLength="37.4" lengthAdjust="spacingAndGlyphs" text-anchor="end" xml:space="preserve" >129.885</text>
<text x="560" y="886" font-size="12" fill="#000000" textLength="25.9" lengthAdjust="spacingAndGlyphs" text-anchor="end" xml:space="preserve" >0.000</text>
<text x="626" y="886" font-size="12" fill="#000000" textLength="25.9" lengthAdjust="spacingAndGlyphs" text-anchor="end" xml:space="preserve" >0.000</text>
<text x="773" y="886" font-size="12" fill="#000000" textLength="95.3" lengthAdjust="spacingAndGlyphs" text-anchor="end" xml:space="preserve" >2017.09.05 09:57:43</text>
<text x="840" y="886" font-size="12" fill="#000000" textLength="37.4" lengthAdjust="spacingAndGlyphs" text-anchor="end" xml:space="preserve" >129.954</text>
<text x="906" y="886" font-size="12" fill="#000000" textLength="20.2" lengthAdjust="spacingAndGlyphs" text-anchor="end" xml:space="preserve" >0.00</text>
<text x="971" y="886" font-size="12" fill="#000000" textLength="20.2" lengthAdjust="spacingAndGlyphs" text-anchor="end" xml:space="preserve" >0.00</text>
<text x="1045" y="886" font-size="12" fill="#000000" textLength="23.6" lengthAdjust="spacingAndGlyphs" text-anchor="end" xml:space="preserve" >-5.04</text>
<text x="1255" y="886" font-size="12" fill="#000000" textLength="14.4" lengthAdjust="spacingAndGlyphs" text-anchor="end" xml:space="preserve" >0.1</text>
<rect x="16" y="892" width="1243" height="20" fill="#ffffff" />
<rect x="16" y="892" width="1243" height="1" fill="#d2d2d2" />
<rect x="100" y="892" width="1" height="20" fill="#d6d6d6" />
<rect x="247" y="892" width="1" height="20" fill="#d6d6d6" />
<rect x="312" y="892" width="1" height="20" fill="#d6d6d6" />
<rect x="365" y="892" width="1" height="20" fill="#d6d6d6" />
<rect x="431" y="892" width="1" height="20" fill="#d6d6d6" />
<rect x="497" y="892" width="1" height="20" fill="#d6d6d6" />
<rect x="563" y="892" width="1" height="20" fill="#d6d6d6" />
<rect x="629" y="892" width="1" height="20" fill="#d6d6d6" />
<rect x="776" y="892" width="1" height="20" fill="#d6d6d6" />
<rect x="843" y="892" width="1" height="20" fill="#d6d6d6" />
<rect x="909" y="892" width="1" height="20" fill="#d6d6d6" />
<rect x="974" y="892" width="1" height="20" fill="#d6d6d6" />
<rect x="1048" y="892" width="1" height="20" fill="#d6d6d6" />
<g shape-rendering="geometricPrecision"><path d="M19.6 895.6 h7.6 l3.2 3.2 v9.8 h-10.8 z" fill="url(#gDoc)" stroke="#474747" stroke-width="1.2"/><path d="M27.2 895.6 v3.2 h3.2" fill="none" stroke="#474747" stroke-width="1.1"/></g>
<g shape-rendering="geometricPrecision"><circle cx="29.4" cy="906.2" r="3.5" fill="#1e9ae8" stroke="#0c3f6e" stroke-width="1"/><circle cx="28.4" cy="905.2" r="1.2" fill="#ffffff" fill-opacity="0.55"/></g>
<text x="38.5" y="906" font-size="12" fill="#000000" textLength="53" lengthAdjust="spacingAndGlyphs" xml:space="preserve" >227614151</text>
<text x="244" y="906" font-size="12" fill="#000000" textLength="95.3" lengthAdjust="spacingAndGlyphs" text-anchor="end" xml:space="preserve" >2017.09.05 09:37:42</text>
<text x="309" y="906" font-size="12" fill="#000000" textLength="18.6" lengthAdjust="spacingAndGlyphs" text-anchor="end" xml:space="preserve" >buy</text>
<text x="362" y="906" font-size="12" fill="#000000" textLength="20.2" lengthAdjust="spacingAndGlyphs" text-anchor="end" xml:space="preserve" >0.00</text>
<text x="428" y="906" font-size="12" fill="#000000" textLength="31.5" lengthAdjust="spacingAndGlyphs" text-anchor="end" xml:space="preserve" >eurjpy</text>
<text x="494" y="906" font-size="12" fill="#000000" textLength="37.4" lengthAdjust="spacingAndGlyphs" text-anchor="end" xml:space="preserve" >129.954</text>
<text x="560" y="906" font-size="12" fill="#000000" textLength="25.9" lengthAdjust="spacingAndGlyphs" text-anchor="end" xml:space="preserve" >0.000</text>
<text x="626" y="906" font-size="12" fill="#000000" textLength="25.9" lengthAdjust="spacingAndGlyphs" text-anchor="end" xml:space="preserve" >0.000</text>
<text x="773" y="906" font-size="12" fill="#000000" textLength="95.3" lengthAdjust="spacingAndGlyphs" text-anchor="end" xml:space="preserve" >2017.09.05 09:57:43</text>
<text x="840" y="906" font-size="12" fill="#000000" textLength="37.4" lengthAdjust="spacingAndGlyphs" text-anchor="end" xml:space="preserve" >129.954</text>
<text x="906" y="906" font-size="12" fill="#000000" textLength="20.2" lengthAdjust="spacingAndGlyphs" text-anchor="end" xml:space="preserve" >0.00</text>
<text x="971" y="906" font-size="12" fill="#000000" textLength="20.2" lengthAdjust="spacingAndGlyphs" text-anchor="end" xml:space="preserve" >0.00</text>
<text x="1045" y="906" font-size="12" fill="#000000" textLength="20.2" lengthAdjust="spacingAndGlyphs" text-anchor="end" xml:space="preserve" >0.00</text>
<text x="1255" y="906" font-size="12" fill="#000000" textLength="139.2" lengthAdjust="spacingAndGlyphs" text-anchor="end" xml:space="preserve" >close hedge by #227613828</text>
<rect x="16" y="912" width="1243" height="20" fill="#c8c8c8" />
<g shape-rendering="geometricPrecision"><circle cx="26.5" cy="922" r="3.3" fill="#d8d8d8" stroke="#999" stroke-width="1.2"/></g>
<text x="37.5" y="926" font-size="11.5" fill="#000" textLength="89.5" lengthAdjust="spacingAndGlyphs" font-weight="bold" xml:space="preserve" >Прибыль: -7.42</text>
<text x="132.8" y="926" font-size="11.5" fill="#000" textLength="72" lengthAdjust="spacingAndGlyphs" font-weight="bold" xml:space="preserve" >Кредит: 0.00</text>
<text x="211.6" y="926" font-size="11.5" fill="#000" textLength="91.4" lengthAdjust="spacingAndGlyphs" font-weight="bold" xml:space="preserve" >Депозит: 250.00</text>
<text x="310" y="926" font-size="11.5" fill="#000" textLength="70.6" lengthAdjust="spacingAndGlyphs" font-weight="bold" xml:space="preserve" >Снятие: 0.00</text>
<text x="1045" y="926" font-size="11.5" fill="#000" text-anchor="end" font-weight="bold" xml:space="preserve" >242.58</text>
<rect x="16" y="932" width="1243" height="3" fill="#f0f0f0" />
<rect x="1260" y="768" width="17" height="167" fill="#f0f0f0" />
<g shape-rendering="geometricPrecision"><path d="M1264 780 l4.5 -4 4.5 4 z" fill="#555"/><path d="M1264 924 l4.5 4 4.5 -4 z" fill="#555"/></g>
<g shape-rendering="geometricPrecision"><rect x="1261.5" y="803.5" width="14" height="113" rx="2" fill="url(#gThumb)" stroke="#9a9a9a"/><path d="M1265 856 h7 M1265 859 h7 M1265 862 h7" stroke="#777"/></g>
<rect x="15" y="935" width="1264" height="1" fill="#000" />
<rect x="15" y="936" width="1264" height="1" fill="#555" />
<rect x="16" y="937" width="1263" height="20" fill="#f0f0f0" />
<text x="28" y="948.5" font-size="12" fill="#6d6d6d" textLength="52" lengthAdjust="spacingAndGlyphs" xml:space="preserve" >Торговля</text>
<text x="101" y="948.5" font-size="12" fill="#6d6d6d" textLength="40" lengthAdjust="spacingAndGlyphs" xml:space="preserve" >Активы</text>
<text x="263" y="948.5" font-size="12" fill="#6d6d6d" textLength="46" lengthAdjust="spacingAndGlyphs" xml:space="preserve" >Новости</text>
<text x="330" y="948.5" font-size="12" fill="#6d6d6d" textLength="41" lengthAdjust="spacingAndGlyphs" xml:space="preserve" >Алерты</text>
<text x="392" y="948.5" font-size="12" fill="#6d6d6d" textLength="33" lengthAdjust="spacingAndGlyphs" xml:space="preserve" >Почта</text>
<text x="458" y="948.5" font-size="12" fill="#6d6d6d" textLength="41" lengthAdjust="spacingAndGlyphs" xml:space="preserve" >Маркет</text>
<text x="519" y="948.5" font-size="12" fill="#6d6d6d" textLength="65" lengthAdjust="spacingAndGlyphs" xml:space="preserve" >Библиотека</text>
<text x="604" y="948.5" font-size="12" fill="#6d6d6d" textLength="52" lengthAdjust="spacingAndGlyphs" xml:space="preserve" >Эксперты</text>
<text x="676" y="948.5" font-size="12" fill="#6d6d6d" textLength="45" lengthAdjust="spacingAndGlyphs" xml:space="preserve" >Журнал</text>
<text x="427.5" y="951.5" font-size="9" fill="#e00000" xml:space="preserve" >14</text>
<rect x="90" y="939" width="1" height="15" fill="#808080" />
<rect x="320" y="939" width="1" height="15" fill="#808080" />
<rect x="382" y="939" width="1" height="15" fill="#808080" />
<rect x="448" y="939" width="1" height="15" fill="#808080" />
<rect x="509" y="939" width="1" height="15" fill="#808080" />
<rect x="594" y="939" width="1" height="15" fill="#808080" />
<rect x="667" y="939" width="1" height="15" fill="#808080" />
<rect x="731" y="939" width="1" height="15" fill="#808080" />
<rect x="151" y="935" width="102" height="20" fill="#ffffff" />
<rect x="151" y="935" width="1" height="20" fill="#000" />
<rect x="252" y="935" width="1" height="20" fill="#000" />
<rect x="151" y="954" width="102" height="1" fill="#000" />
<rect x="152" y="955" width="102" height="1" fill="#777" />
<text x="161" y="948.5" font-size="12" fill="#000" textLength="81" lengthAdjust="spacingAndGlyphs" xml:space="preserve" >История Счета</text>
<rect x="0" y="957" width="1279" height="1" fill="#f0f0f0" />
<rect x="0" y="959" width="1279" height="1" fill="#ffffff" />
<rect x="0" y="960" width="1279" height="1" fill="#a0a0a0" />
<rect x="0" y="961" width="1279" height="1" fill="#ffffff" />
<rect x="0" y="962" width="1279" height="22" fill="#f0f0f0" />
<text x="2" y="977.5" font-size="12" fill="#000" textLength="178" lengthAdjust="spacingAndGlyphs" xml:space="preserve" >Для вызова справки нажмите F1</text>
<rect x="586" y="965" width="1" height="19" fill="#a0a0a0" />
<rect x="702" y="965" width="1" height="19" fill="#a0a0a0" />
<rect x="804" y="965" width="1" height="19" fill="#a0a0a0" />
<rect x="875" y="965" width="1" height="19" fill="#a0a0a0" />
<rect x="946" y="965" width="1" height="19" fill="#a0a0a0" />
<rect x="1015" y="965" width="1" height="19" fill="#a0a0a0" />
<rect x="1084" y="965" width="1" height="19" fill="#a0a0a0" />
<rect x="1150" y="965" width="1" height="19" fill="#a0a0a0" />
<text x="592" y="977.5" font-size="12" fill="#000" textLength="38" lengthAdjust="spacingAndGlyphs" xml:space="preserve" >Default</text>
<rect x="1156" y="967" width="2" height="13" fill="#4a7a00" />
<rect x="1156" y="977" width="2" height="3" fill="#00305a" />
<rect x="1159" y="967" width="2" height="13" fill="#4a7a00" />
<rect x="1159" y="976" width="2" height="4" fill="#00305a" />
<rect x="1162" y="967" width="2" height="13" fill="#4a7a00" />
<rect x="1162" y="975" width="2" height="5" fill="#00305a" />
<rect x="1165" y="967" width="2" height="13" fill="#4a7a00" />
<rect x="1165" y="974" width="2" height="6" fill="#00305a" />
<rect x="1168" y="967" width="2" height="13" fill="#4a7a00" />
<rect x="1168" y="973" width="2" height="7" fill="#00305a" />
<rect x="1171" y="967" width="2" height="13" fill="#4a7a00" />
<rect x="1171" y="972" width="2" height="8" fill="#00305a" />
<rect x="1174" y="967" width="2" height="13" fill="#4a7a00" />
<rect x="1174" y="971" width="2" height="9" fill="#00305a" />
<rect x="1177" y="967" width="2" height="13" fill="#4a7a00" />
<rect x="1177" y="970" width="2" height="10" fill="#00305a" />
<text x="1183.5" y="978" font-size="12" fill="#000" textLength="61.5" lengthAdjust="spacingAndGlyphs" xml:space="preserve" >59680/14 kb</text>
</svg></body></html>
